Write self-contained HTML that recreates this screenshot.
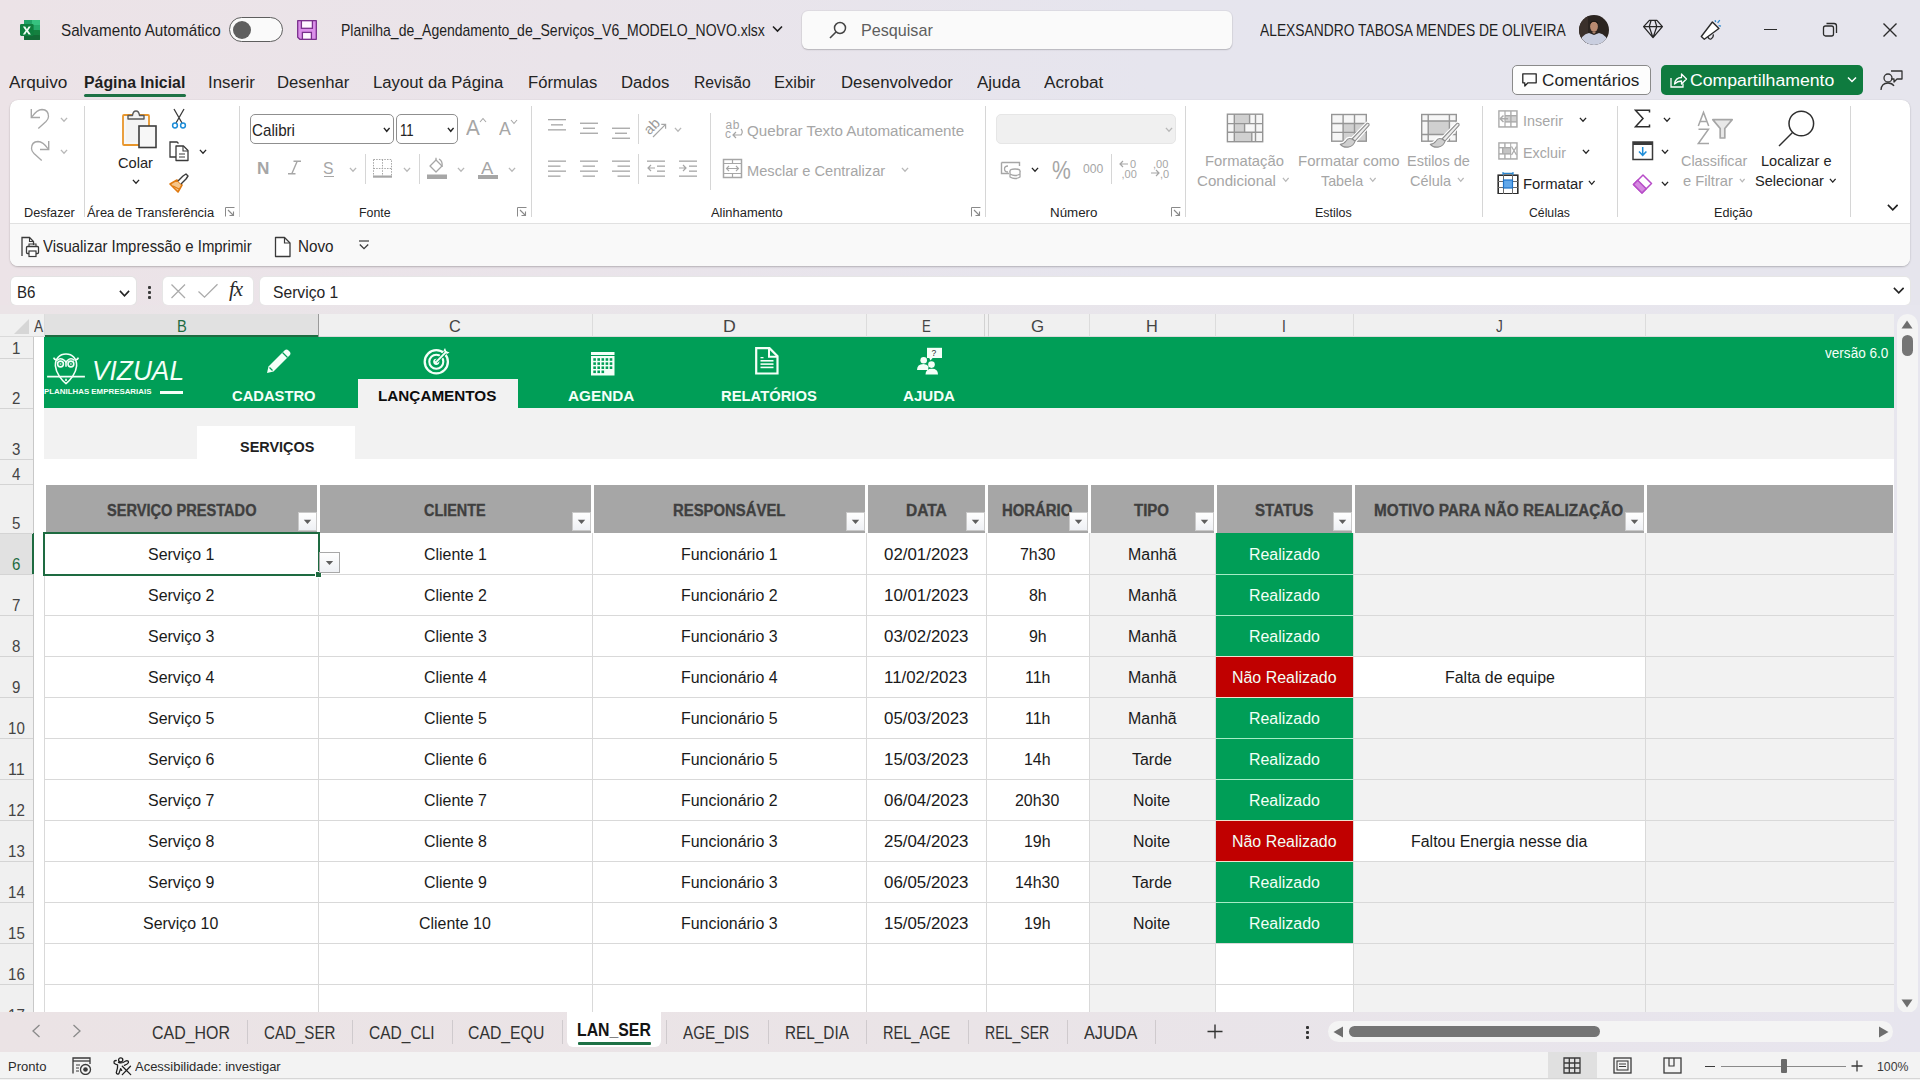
<!DOCTYPE html>
<html><head><meta charset="utf-8"><style>
html,body{margin:0;padding:0;}
body{width:1920px;height:1080px;overflow:hidden;position:relative;font-family:"Liberation Sans", sans-serif;background:#E9E5EA;}
.tx{}
</style></head><body>
<div style="position:absolute;left:0;top:0;width:1920px;height:314px;background:linear-gradient(90deg,#ECE3E7 0%,#EAE4EA 30%,#E6E5EE 60%,#E6E5ED 100%)"></div>
<svg style="position:absolute;left:20px;top:20px;" width="20" height="20" viewBox="0 0 20 20"><rect x="4" y="0" width="16" height="20" rx="1" fill="#1D9A5A"/><rect x="12" y="0" width="8" height="5" fill="#36C27F"/><rect x="4" y="0" width="8" height="5" fill="#21A366"/><rect x="12" y="5" width="8" height="5" fill="#27AB6B"/><rect x="4" y="10" width="16" height="10" rx="1" fill="#15803F"/><rect x="4" y="15" width="16" height="5" rx="1" fill="#136A36"/><rect x="0" y="3.9" width="13.6" height="12" rx="1.3" fill="#0F7F3E"/><path d="M2.9 6.6 H5.2 L6.9 9.3 L8.6 6.6 H10.8 L8.1 10.5 L10.9 14.5 H8.6 L6.8 11.8 L5.1 14.5 H2.8 L5.6 10.5 Z" fill="#F2FFF6"/></svg>
<div id="t0" class="tx" style="position:absolute;left:60.50px;top:22.39px;font-size:15.70px;line-height:17.54px;color:#1F1F1F;font-weight:400;white-space:nowrap;transform-origin:0 0;transform:scaleX(0.9696);">Salvamento Automático</div>
<div style="position:absolute;left:229px;top:17px;width:54px;height:25px;box-sizing:border-box;border:1px solid #5E5E5E;border-radius:13px;background:#FAFAFA"></div>
<div style="position:absolute;left:233px;top:21px;width:18px;height:18px;border-radius:50%;background:#5F5F5F"></div>
<svg style="position:absolute;left:297px;top:20px;" width="20" height="20" viewBox="0 0 20 20"><path d="M0.7 0.7 H19.3 V19.3 H2.8 L0.7 17.2 Z" fill="#DC8FEA" stroke="#7A2F8C" stroke-width="1.3" stroke-linejoin="round"/><rect x="4.4" y="0.7" width="11" height="7.6" fill="#FFF6FF" stroke="#7A2F8C" stroke-width="1.3"/><rect x="5.4" y="12.4" width="9" height="6.9" fill="#FFF6FF" stroke="#7A2F8C" stroke-width="1.3"/></svg>
<div id="t1" class="tx" style="position:absolute;left:341.00px;top:22.39px;font-size:15.70px;line-height:17.54px;color:#1F1F1F;font-weight:400;white-space:nowrap;transform-origin:0 0;transform:scaleX(0.8934);">Planilha_de_Agendamento_de_Serviços_V6_MODELO_NOVO.xlsx</div>
<svg style="position:absolute;left:772px;top:25px;" width="11" height="8" viewBox="0 0 11 8"><path d="M1 1.5 L5.5 6 L10 1.5" stroke="#1F1F1F" stroke-width="1.6" fill="none"/></svg>
<div style="position:absolute;left:802px;top:11px;width:430px;height:38px;box-sizing:border-box;background:#FAFAFA;border-radius:6px;box-shadow:0 1px 1.5px rgba(0,0,0,0.18), 0 0 0 1px rgba(0,0,0,0.04)"></div>
<svg style="position:absolute;left:828px;top:20px;" width="20" height="20" viewBox="0 0 20 20"><circle cx="12" cy="8" r="5.5" stroke="#444" stroke-width="1.5" fill="none"/><path d="M8 12 L2 18" stroke="#444" stroke-width="1.6"/></svg>
<div id="t2" class="tx" style="position:absolute;left:861.00px;top:21.79px;font-size:15.70px;line-height:17.54px;color:#5E5E5E;font-weight:400;white-space:nowrap;transform-origin:0 0;transform:scaleX(1.0292);">Pesquisar</div>
<div id="t3" class="tx" style="position:absolute;left:1260.00px;top:22.39px;font-size:15.70px;line-height:17.54px;color:#1F1F1F;font-weight:400;white-space:nowrap;transform-origin:0 0;transform:scaleX(0.8806);">ALEXSANDRO TABOSA MENDES DE OLIVEIRA</div>
<svg style="position:absolute;left:1579px;top:15px;" width="30" height="30" viewBox="0 0 30 30"><defs><clipPath id="av"><circle cx="15" cy="15" r="15"/></clipPath></defs><g clip-path="url(#av)"><rect width="30" height="30" fill="#2B2420"/><rect x="0" y="0" width="9" height="30" fill="#3A302B"/><path d="M1 30 Q2 19 10 18 L15 20 L20 18 Q28 19 29 30 Z" fill="#C9CEDF"/><ellipse cx="15" cy="11.5" rx="3.9" ry="5.2" fill="#B98A70"/><path d="M11 9 Q15 4.5 19 9 L19 7.5 Q15 4 11 7.5Z" fill="#1A1411"/><path d="M13 17 L15 19 L17 17 Z" fill="#A88068"/></g></svg>
<svg style="position:absolute;left:1643px;top:19px;" width="21" height="20" viewBox="0 0 21 20"><path d="M6.4 1.4 H13.9 L19.4 7.6 L10 18.6 L0.6 7.6 Z M0.6 7.6 H19.4 M8.1 1.4 L6.2 7.6 L10 18.6 L13.8 7.6 L11.9 1.4" stroke="#262626" stroke-width="1.3" fill="none" stroke-linejoin="round"/></svg>
<svg style="position:absolute;left:1700px;top:18px;" width="24" height="24" viewBox="0 0 24 24"><path d="M1.3 18.5 L12.4 4 L18.9 10.5 L4.3 21.3 Z" stroke="#2B2B2B" stroke-width="1.4" fill="#FFFFFF" stroke-linejoin="round"/><path d="M7.8 18.8 Q9 21.8 11.2 20.8 Q13.6 19.3 13.3 16.4" stroke="#2B2B2B" stroke-width="1.3" fill="none"/><path d="M15 2.3 L15.7 4 M19.8 2.2 L17.6 4.8 M18.6 7.6 L21 8.1" stroke="#2F8ACF" stroke-width="1.3"/></svg>
<div style="position:absolute;left:1764px;top:29px;width:13px;height:1.3px;background:#2B2B2B"></div>
<svg style="position:absolute;left:1822px;top:22px;" width="16" height="16" viewBox="0 0 16 16"><rect x="1.5" y="4" width="10" height="10" rx="2" stroke="#2B2B2B" stroke-width="1.3" fill="none"/><path d="M4.5 1.5 H12 Q14.5 1.5 14.5 4 V11" stroke="#2B2B2B" stroke-width="1.3" fill="none"/></svg>
<svg style="position:absolute;left:1882px;top:22px;" width="16" height="16" viewBox="0 0 16 16"><path d="M1.5 1.5 L14.5 14.5 M14.5 1.5 L1.5 14.5" stroke="#2B2B2B" stroke-width="1.4"/></svg>
<div id="t4" class="tx" style="position:absolute;left:8.50px;top:72.73px;font-size:16.42px;line-height:18.35px;color:#242424;font-weight:400;white-space:nowrap;transform-origin:0 0;transform:scaleX(1.0478);">Arquivo</div>
<div id="t5" class="tx" style="position:absolute;left:207.50px;top:72.73px;font-size:16.42px;line-height:18.35px;color:#242424;font-weight:400;white-space:nowrap;transform-origin:0 0;transform:scaleX(1.0265);">Inserir</div>
<div id="t6" class="tx" style="position:absolute;left:277.00px;top:72.73px;font-size:16.42px;line-height:18.35px;color:#242424;font-weight:400;white-space:nowrap;transform-origin:0 0;transform:scaleX(1.0163);">Desenhar</div>
<div id="t7" class="tx" style="position:absolute;left:373.00px;top:72.73px;font-size:16.42px;line-height:18.35px;color:#242424;font-weight:400;white-space:nowrap;transform-origin:0 0;transform:scaleX(1.0202);">Layout da Página</div>
<div id="t8" class="tx" style="position:absolute;left:528.00px;top:72.73px;font-size:16.42px;line-height:18.35px;color:#242424;font-weight:400;white-space:nowrap;transform-origin:0 0;transform:scaleX(1.0135);">Fórmulas</div>
<div id="t9" class="tx" style="position:absolute;left:621.00px;top:72.73px;font-size:16.42px;line-height:18.35px;color:#242424;font-weight:400;white-space:nowrap;transform-origin:0 0;transform:scaleX(1.0182);">Dados</div>
<div id="t10" class="tx" style="position:absolute;left:693.50px;top:72.73px;font-size:16.42px;line-height:18.35px;color:#242424;font-weight:400;white-space:nowrap;transform-origin:0 0;transform:scaleX(0.9581);">Revisão</div>
<div id="t11" class="tx" style="position:absolute;left:774.00px;top:72.73px;font-size:16.42px;line-height:18.35px;color:#242424;font-weight:400;white-space:nowrap;transform-origin:0 0;transform:scaleX(1.0065);">Exibir</div>
<div id="t12" class="tx" style="position:absolute;left:840.50px;top:72.73px;font-size:16.42px;line-height:18.35px;color:#242424;font-weight:400;white-space:nowrap;transform-origin:0 0;transform:scaleX(1.0216);">Desenvolvedor</div>
<div id="t13" class="tx" style="position:absolute;left:976.50px;top:72.73px;font-size:16.42px;line-height:18.35px;color:#242424;font-weight:400;white-space:nowrap;transform-origin:0 0;transform:scaleX(1.0317);">Ajuda</div>
<div id="t14" class="tx" style="position:absolute;left:1043.50px;top:72.73px;font-size:16.42px;line-height:18.35px;color:#242424;font-weight:400;white-space:nowrap;transform-origin:0 0;transform:scaleX(1.0487);">Acrobat</div>
<div id="t15" class="tx" style="position:absolute;left:83.50px;top:72.73px;font-size:16.42px;line-height:18.35px;color:#1F1F1F;font-weight:700;white-space:nowrap;transform-origin:0 0;transform:scaleX(0.9661);">Página Inicial</div>
<div style="position:absolute;left:84px;top:94px;width:102px;height:3px;background:#1E7145;border-radius:2px"></div>
<div style="position:absolute;left:1512px;top:65px;width:139px;height:30px;box-sizing:border-box;border:1px solid #8A8A8A;border-radius:5px;background:#FDFDFD"></div>
<svg style="position:absolute;left:1521px;top:72px;" width="18" height="17" viewBox="0 0 18 17"><path d="M1.8 1.8 H15.2 V10.8 H7 L3.8 14 V10.8 H1.8 Z" stroke="#242424" stroke-width="1.3" fill="none" stroke-linejoin="round"/></svg>
<div id="t16" class="tx" style="position:absolute;left:1541.50px;top:71.43px;font-size:16.42px;line-height:18.35px;color:#1F1F1F;font-weight:400;white-space:nowrap;transform-origin:0 0;transform:scaleX(1.0461);">Comentários</div>
<div style="position:absolute;left:1661px;top:65px;width:202px;height:30px;border-radius:5px;background:#0F7B3F"></div>
<svg style="position:absolute;left:1669px;top:71px;" width="19" height="18" viewBox="0 0 19 18"><path d="M2 7 V16 H14 V12.5" stroke="#fff" stroke-width="1.3" fill="none"/><path d="M5.5 13 Q6.5 6.5 12.5 6.5 V3 L17.5 8 L12.5 13 V10 Q8.5 10 5.5 13Z" stroke="#fff" stroke-width="1.3" fill="none" stroke-linejoin="round"/></svg>
<div id="t17" class="tx" style="position:absolute;left:1690.00px;top:71.43px;font-size:16.42px;line-height:18.35px;color:#FFFFFF;font-weight:400;white-space:nowrap;transform-origin:0 0;transform:scaleX(1.0765);">Compartilhamento</div>
<svg style="position:absolute;left:1847px;top:76px;" width="10" height="8" viewBox="0 0 10 8"><path d="M1 1.5 L5 5.5 L9 1.5" stroke="#fff" stroke-width="1.5" fill="none"/></svg>
<svg style="position:absolute;left:1880px;top:69px;" width="23" height="22" viewBox="0 0 23 22"><circle cx="8" cy="9" r="4" stroke="#333" stroke-width="1.3" fill="none"/><path d="M1 21 Q1.5 14 8 14 Q12 14 14 17" stroke="#333" stroke-width="1.3" fill="none"/><path d="M11 2 H22 V10 H17 L14 13 V10 H11" stroke="#333" stroke-width="1.3" fill="none" stroke-linejoin="round"/></svg>
<div style="position:absolute;left:10px;top:100px;width:1900px;height:166px;background:#FFFFFF;border-radius:8px;box-shadow:0 1px 2px rgba(0,0,0,0.22),0 0 1px rgba(0,0,0,0.12);overflow:hidden"><div style="position:absolute;left:0;top:123px;width:1900px;height:43px;background:#F9F9F9;border-top:1px solid #E1E1E1"></div></div>
<div style="position:absolute;left:84px;top:106px;width:1px;height:111px;background:#D6D6D6"></div>
<div style="position:absolute;left:239px;top:106px;width:1px;height:111px;background:#D6D6D6"></div>
<div style="position:absolute;left:531px;top:106px;width:1px;height:111px;background:#D6D6D6"></div>
<div style="position:absolute;left:710px;top:113px;width:1px;height:77px;background:#D6D6D6"></div>
<div style="position:absolute;left:985px;top:106px;width:1px;height:111px;background:#D6D6D6"></div>
<div style="position:absolute;left:1185px;top:106px;width:1px;height:111px;background:#D6D6D6"></div>
<div style="position:absolute;left:1482px;top:106px;width:1px;height:111px;background:#D6D6D6"></div>
<div style="position:absolute;left:1617px;top:106px;width:1px;height:111px;background:#D6D6D6"></div>
<div style="position:absolute;left:1850px;top:106px;width:1px;height:111px;background:#D6D6D6"></div>
<div style="position:absolute;left:365px;top:154px;width:1px;height:30px;background:#D6D6D6"></div>
<div style="position:absolute;left:419px;top:154px;width:1px;height:30px;background:#D6D6D6"></div>
<div style="position:absolute;left:638px;top:154px;width:1px;height:30px;background:#D6D6D6"></div>
<div style="position:absolute;left:1111px;top:154px;width:1px;height:30px;background:#D6D6D6"></div>
<div style="position:absolute;left:638px;top:114px;width:1px;height:30px;background:#D6D6D6"></div>
<div id="t18" class="tx" style="position:absolute;left:23.70px;top:205.95px;font-size:12.65px;line-height:14.13px;color:#242424;font-weight:400;white-space:nowrap;transform-origin:0 0;transform:scaleX(1.0041);">Desfazer</div>
<div id="t19" class="tx" style="position:absolute;left:87.10px;top:205.95px;font-size:12.65px;line-height:14.13px;color:#242424;font-weight:400;white-space:nowrap;transform-origin:0 0;transform:scaleX(1.0219);">Área de Transferência</div>
<div id="t20" class="tx" style="position:absolute;left:358.50px;top:205.95px;font-size:12.65px;line-height:14.13px;color:#242424;font-weight:400;white-space:nowrap;transform-origin:0 0;transform:scaleX(0.9775);">Fonte</div>
<div id="t21" class="tx" style="position:absolute;left:711.00px;top:205.95px;font-size:12.65px;line-height:14.13px;color:#242424;font-weight:400;white-space:nowrap;transform-origin:0 0;transform:scaleX(1.0216);">Alinhamento</div>
<div id="t22" class="tx" style="position:absolute;left:1050.40px;top:205.95px;font-size:12.65px;line-height:14.13px;color:#242424;font-weight:400;white-space:nowrap;transform-origin:0 0;transform:scaleX(1.0563);">Número</div>
<div id="t23" class="tx" style="position:absolute;left:1314.50px;top:205.95px;font-size:12.65px;line-height:14.13px;color:#242424;font-weight:400;white-space:nowrap;transform-origin:0 0;transform:scaleX(0.9856);">Estilos</div>
<div id="t24" class="tx" style="position:absolute;left:1528.60px;top:205.95px;font-size:12.65px;line-height:14.13px;color:#242424;font-weight:400;white-space:nowrap;transform-origin:0 0;transform:scaleX(0.9678);">Células</div>
<div id="t25" class="tx" style="position:absolute;left:1713.50px;top:205.95px;font-size:12.65px;line-height:14.13px;color:#242424;font-weight:400;white-space:nowrap;transform-origin:0 0;transform:scaleX(0.9985);">Edição</div>
<svg style="position:absolute;left:225px;top:207px;" width="10" height="10" viewBox="0 0 10 10"><path d="M0.5 9.5 V0.5 H9.5" stroke="#8A8A8A" stroke-width="1" fill="none"/><path d="M3 3 L8.5 8.5 M4.5 8.5 H8.5 V4.5" stroke="#8A8A8A" stroke-width="1.1" fill="none"/></svg>
<svg style="position:absolute;left:517px;top:207px;" width="10" height="10" viewBox="0 0 10 10"><path d="M0.5 9.5 V0.5 H9.5" stroke="#8A8A8A" stroke-width="1" fill="none"/><path d="M3 3 L8.5 8.5 M4.5 8.5 H8.5 V4.5" stroke="#8A8A8A" stroke-width="1.1" fill="none"/></svg>
<svg style="position:absolute;left:971px;top:207px;" width="10" height="10" viewBox="0 0 10 10"><path d="M0.5 9.5 V0.5 H9.5" stroke="#8A8A8A" stroke-width="1" fill="none"/><path d="M3 3 L8.5 8.5 M4.5 8.5 H8.5 V4.5" stroke="#8A8A8A" stroke-width="1.1" fill="none"/></svg>
<svg style="position:absolute;left:1171px;top:207px;" width="10" height="10" viewBox="0 0 10 10"><path d="M0.5 9.5 V0.5 H9.5" stroke="#8A8A8A" stroke-width="1" fill="none"/><path d="M3 3 L8.5 8.5 M4.5 8.5 H8.5 V4.5" stroke="#8A8A8A" stroke-width="1.1" fill="none"/></svg>
<svg style="position:absolute;left:30px;top:108px;" width="20" height="22" viewBox="0 0 20 22"><path d="M1.3 1 V9.5 H10" stroke="#A6A6A6" stroke-width="1.4" fill="none"/><path d="M1.8 9 Q7 1.5 12 1.5 Q18.5 1.8 18.5 8.5 Q18.5 11 16 13.5 L8.3 20.5" stroke="#A6A6A6" stroke-width="1.3" fill="none"/></svg>
<svg style="position:absolute;left:30px;top:140px;" width="20" height="22" viewBox="0 0 20 22"><path d="M18.7 1 V9.5 H10" stroke="#A6A6A6" stroke-width="1.4" fill="none"/><path d="M18.2 9 Q13 1.5 8 1.5 Q1.5 1.8 1.5 8.5 Q1.5 11 4 13.5 L11.7 20.5" stroke="#A6A6A6" stroke-width="1.3" fill="none"/></svg>
<svg style="position:absolute;left:59.5px;top:117.0px;" width="8" height="5.5" viewBox="0 0 8 5.5"><path d="M0.9 0.9 L4.0 4.3 L7.1 0.9" stroke="#B8B8B8" stroke-width="1.3" fill="none"/></svg>
<svg style="position:absolute;left:59.5px;top:149.0px;" width="8" height="5.5" viewBox="0 0 8 5.5"><path d="M0.9 0.9 L4.0 4.3 L7.1 0.9" stroke="#B8B8B8" stroke-width="1.3" fill="none"/></svg>
<svg style="position:absolute;left:120px;top:109px;" width="38" height="40" viewBox="0 0 38 40"><rect x="3" y="6" width="26" height="30" rx="1" fill="#F7F7F7" stroke="#E8962C" stroke-width="1.8"/><rect x="6" y="9" width="20" height="24" fill="#F3F3F3"/><path d="M8 10 V6.5 H12.5 Q13 2 16 2 Q19 2 19.5 6.5 H24 V10 Z" fill="#F3F3F3" stroke="#5A5A5A" stroke-width="1.4" stroke-linejoin="round"/><rect x="19" y="17" width="17" height="21.5" fill="#F7F7F7" stroke="#3E3E3E" stroke-width="1.6"/></svg>
<div id="t26" class="tx" style="position:absolute;left:117.50px;top:155.34px;font-size:14.54px;line-height:16.24px;color:#242424;font-weight:400;white-space:nowrap;transform-origin:0 0;transform:scaleX(1.0076);">Colar</div>
<svg style="position:absolute;left:131.5px;top:179.0px;" width="8" height="5.5" viewBox="0 0 8 5.5"><path d="M0.9 0.9 L4.0 4.3 L7.1 0.9" stroke="#242424" stroke-width="1.3" fill="none"/></svg>
<svg style="position:absolute;left:171px;top:108px;" width="16" height="22" viewBox="0 0 16 22"><path d="M3 1 L11 15 M13 1 L5 15" stroke="#3A3A3A" stroke-width="1.3"/><circle cx="4" cy="17.5" r="2.4" stroke="#1E8DD8" stroke-width="1.5" fill="none"/><circle cx="12" cy="17.5" r="2.4" stroke="#1E8DD8" stroke-width="1.5" fill="none"/></svg>
<svg style="position:absolute;left:168px;top:140px;" width="22" height="22" viewBox="0 0 22 22"><path d="M8 17 H2 V2 H9 L10.5 3.5" stroke="#3A3A3A" stroke-width="1.3" fill="none"/><path d="M8 6 H15.5 L20 10.5 V20.5 H8 Z" stroke="#3A3A3A" stroke-width="1.3" fill="#fff" stroke-linejoin="round"/><path d="M15 6 V11 H20 M11 14 H17 M11 17 H17" stroke="#3A3A3A" stroke-width="1.1" fill="none"/></svg>
<svg style="position:absolute;left:198.5px;top:149.0px;" width="8" height="5.5" viewBox="0 0 8 5.5"><path d="M0.9 0.9 L4.0 4.3 L7.1 0.9" stroke="#242424" stroke-width="1.3" fill="none"/></svg>
<svg style="position:absolute;left:168px;top:172px;" width="22" height="21" viewBox="0 0 22 21"><path d="M2 12 L9 8 L14 13 L10 20 Z" fill="#F5C58A" stroke="#E07A10" stroke-width="1.6" stroke-linejoin="round"/><path d="M5 14 L11 17" stroke="#E07A10" stroke-width="1.2"/><path d="M10 9 L15 4 L18 2 L20 4 L18 7 L13 12" stroke="#3A3A3A" stroke-width="1.4" fill="#fff" stroke-linejoin="round"/></svg>
<div style="position:absolute;left:250px;top:114px;width:144px;height:30px;box-sizing:border-box;border:1px solid #8F8F8F;border-radius:5px;background:#fff"></div>
<div id="t27" class="tx" style="position:absolute;left:252.30px;top:121.53px;font-size:15.99px;line-height:17.86px;color:#242424;font-weight:400;white-space:nowrap;transform-origin:0 0;transform:scaleX(0.9490);">Calibri</div>
<svg style="position:absolute;left:382.5px;top:127.0px;" width="7.5" height="5.5" viewBox="0 0 7.5 5.5"><path d="M0.9 0.9 L3.75 4.3 L6.6 0.9" stroke="#242424" stroke-width="1.4" fill="none"/></svg>
<div style="position:absolute;left:396px;top:114px;width:62px;height:30px;box-sizing:border-box;border:1px solid #8F8F8F;border-radius:5px;background:#fff"></div>
<div id="t28" class="tx" style="position:absolute;left:399.50px;top:121.53px;font-size:15.99px;line-height:17.86px;color:#242424;font-weight:400;white-space:nowrap;transform-origin:0 0;transform:scaleX(0.8256);">11</div>
<svg style="position:absolute;left:446.5px;top:127.0px;" width="7.5" height="5.5" viewBox="0 0 7.5 5.5"><path d="M0.9 0.9 L3.75 4.3 L6.6 0.9" stroke="#242424" stroke-width="1.4" fill="none"/></svg>
<div id="t29" class="tx" style="position:absolute;left:465.50px;top:115.34px;font-size:22.82px;line-height:25.49px;color:#A6A6A6;font-weight:400;white-space:nowrap;transform-origin:0 0;transform:scaleX(0.9068);">A</div>
<svg style="position:absolute;left:479px;top:117px;" width="8" height="6" viewBox="0 0 8 6"><path d="M1 5 L4 1.5 L7 5" stroke="#A6A6A6" stroke-width="1.1" fill="none"/></svg>
<div id="t30" class="tx" style="position:absolute;left:499.00px;top:119.42px;font-size:18.31px;line-height:20.46px;color:#A6A6A6;font-weight:400;white-space:nowrap;transform-origin:0 0;transform:scaleX(0.9657);">A</div>
<svg style="position:absolute;left:510px;top:119px;" width="8" height="6" viewBox="0 0 8 6"><path d="M1 1 L4 4.5 L7 1" stroke="#A6A6A6" stroke-width="1.1" fill="none"/></svg>
<div id="t31" class="tx" style="position:absolute;left:257.40px;top:158.80px;font-size:17.01px;line-height:19.00px;color:#A6A6A6;font-weight:700;white-space:nowrap;transform-origin:0 0;transform:scaleX(1.0097);">N</div>
<svg style="position:absolute;left:287px;top:160px;" width="15" height="15" viewBox="0 0 15 15"><path d="M6.5 1.2 H14 M1 13.8 H8.5 M10.2 1.2 L4.8 13.8" stroke="#A6A6A6" stroke-width="1.4" fill="none"/></svg>
<div id="t32" class="tx" style="position:absolute;left:323.00px;top:158.80px;font-size:17.01px;line-height:19.00px;color:#A6A6A6;font-weight:400;white-space:nowrap;transform-origin:0 0;transform:scaleX(0.9256);">S</div>
<div style="position:absolute;left:324px;top:175.5px;width:10px;height:1.3px;background:#A6A6A6"></div>
<svg style="position:absolute;left:348.5px;top:167.0px;" width="8" height="5.5" viewBox="0 0 8 5.5"><path d="M0.9 0.9 L4.0 4.3 L7.1 0.9" stroke="#B8B8B8" stroke-width="1.3" fill="none"/></svg>
<svg style="position:absolute;left:372px;top:158px;" width="21" height="21" viewBox="0 0 21 21"><g stroke="#A6A6A6" stroke-width="1" stroke-dasharray="1.5 1.2" fill="none"><path d="M1.5 1.5 H19.5 V19 M1.5 1.5 V19 M10.5 1.5 V19 M1.5 10.5 H19.5"/></g><rect x="1" y="17.5" width="19" height="2.2" fill="#A6A6A6"/></svg>
<svg style="position:absolute;left:402.5px;top:167.0px;" width="8" height="5.5" viewBox="0 0 8 5.5"><path d="M0.9 0.9 L4.0 4.3 L7.1 0.9" stroke="#B8B8B8" stroke-width="1.3" fill="none"/></svg>
<svg style="position:absolute;left:427px;top:157px;" width="21" height="23" viewBox="0 0 21 23"><path d="M3 9 L9 3 L15 9 L9 15 Z" stroke="#A6A6A6" stroke-width="1.3" fill="none" stroke-linejoin="round"/><path d="M9 3 V0.8 M12 2 Q16 4 15 10" stroke="#A6A6A6" stroke-width="1.3" fill="none"/><rect x="0" y="17.5" width="20" height="4.5" fill="#A6A6A6"/></svg>
<svg style="position:absolute;left:456.5px;top:167.0px;" width="8" height="5.5" viewBox="0 0 8 5.5"><path d="M0.9 0.9 L4.0 4.3 L7.1 0.9" stroke="#B8B8B8" stroke-width="1.3" fill="none"/></svg>
<div id="t33" class="tx" style="position:absolute;left:481.00px;top:158.80px;font-size:17.01px;line-height:19.00px;color:#A6A6A6;font-weight:400;white-space:nowrap;transform-origin:0 0;transform:scaleX(1.0755);">A</div>
<div style="position:absolute;left:478px;top:174.5px;width:20px;height:4.5px;background:#A6A6A6"></div>
<svg style="position:absolute;left:507.5px;top:167.0px;" width="8" height="5.5" viewBox="0 0 8 5.5"><path d="M0.9 0.9 L4.0 4.3 L7.1 0.9" stroke="#B8B8B8" stroke-width="1.3" fill="none"/></svg>
<svg style="position:absolute;left:548px;top:115px;" width="20" height="65" viewBox="0 0 20 65"><rect x="0" y="4" width="18" height="1.3" fill="#A6A6A6"/><rect x="3" y="9.2" width="12" height="1.3" fill="#A6A6A6"/><rect x="0" y="14.2" width="18" height="1.3" fill="#A6A6A6"/></svg>
<svg style="position:absolute;left:580px;top:115px;" width="20" height="65" viewBox="0 0 20 65"><rect x="0" y="7.6" width="18" height="1.3" fill="#A6A6A6"/><rect x="3" y="12.6" width="12" height="1.3" fill="#A6A6A6"/><rect x="0" y="17.6" width="18" height="1.3" fill="#A6A6A6"/></svg>
<svg style="position:absolute;left:612px;top:115px;" width="20" height="65" viewBox="0 0 20 65"><rect x="0" y="12.6" width="18" height="1.3" fill="#A6A6A6"/><rect x="3" y="17.6" width="12" height="1.3" fill="#A6A6A6"/><rect x="0" y="22.6" width="18" height="1.3" fill="#A6A6A6"/></svg>
<svg style="position:absolute;left:643px;top:116px;" width="26" height="24" viewBox="0 0 26 24"><text x="0" y="0" font-size="14.5" fill="#9A9A9A" font-family="Liberation Sans" transform="translate(6.5,19.5) rotate(-45)">ab</text><path d="M10 21 L22.6 8.3 M18.3 8.3 H22.6 V12.7" stroke="#A6A6A6" stroke-width="1.2" fill="none"/></svg>
<svg style="position:absolute;left:673.5px;top:127.0px;" width="8" height="5.5" viewBox="0 0 8 5.5"><path d="M0.9 0.9 L4.0 4.3 L7.1 0.9" stroke="#B8B8B8" stroke-width="1.3" fill="none"/></svg>
<svg style="position:absolute;left:548px;top:115px;" width="20" height="65" viewBox="0 0 20 65"><rect x="0" y="45.5" width="18" height="1.3" fill="#A6A6A6"/><rect x="0" y="50.5" width="12.5" height="1.3" fill="#A6A6A6"/><rect x="0" y="55.5" width="18" height="1.3" fill="#A6A6A6"/><rect x="0" y="60.5" width="12.5" height="1.3" fill="#A6A6A6"/></svg>
<svg style="position:absolute;left:580px;top:115px;" width="20" height="65" viewBox="0 0 20 65"><rect x="0" y="45.5" width="18" height="1.3" fill="#A6A6A6"/><rect x="2.7" y="50.5" width="12.3" height="1.3" fill="#A6A6A6"/><rect x="0" y="55.5" width="18" height="1.3" fill="#A6A6A6"/><rect x="2.7" y="60.5" width="12.3" height="1.3" fill="#A6A6A6"/></svg>
<svg style="position:absolute;left:612px;top:115px;" width="20" height="65" viewBox="0 0 20 65"><rect x="0" y="45.5" width="18" height="1.3" fill="#A6A6A6"/><rect x="5.5" y="50.5" width="12.5" height="1.3" fill="#A6A6A6"/><rect x="0" y="55.5" width="18" height="1.3" fill="#A6A6A6"/><rect x="5.5" y="60.5" width="12.5" height="1.3" fill="#A6A6A6"/></svg>
<svg style="position:absolute;left:647px;top:158px;" width="20" height="20" viewBox="0 0 20 20"><rect x="0" y="2.5" width="18" height="1.3" fill="#A6A6A6"/><rect x="10" y="7.5" width="8" height="1.3" fill="#A6A6A6"/><rect x="10" y="12.5" width="8" height="1.3" fill="#A6A6A6"/><rect x="0" y="17.5" width="18" height="1.3" fill="#A6A6A6"/><path d="M8 10 H1 M4 7 L1 10 L4 13" stroke="#A6A6A6" stroke-width="1.2" fill="none"/></svg>
<svg style="position:absolute;left:679px;top:158px;" width="20" height="20" viewBox="0 0 20 20"><rect x="0" y="2.5" width="18" height="1.3" fill="#A6A6A6"/><rect x="10" y="7.5" width="8" height="1.3" fill="#A6A6A6"/><rect x="10" y="12.5" width="8" height="1.3" fill="#A6A6A6"/><rect x="0" y="17.5" width="18" height="1.3" fill="#A6A6A6"/><path d="M0 10 H7 M4 7 L7 10 L4 13" stroke="#A6A6A6" stroke-width="1.2" fill="none"/></svg>
<svg style="position:absolute;left:725px;top:119px;" width="20" height="21" viewBox="0 0 20 21"><text x="0.5" y="9.5" font-size="12" fill="#A6A6A6" font-family="Liberation Sans" textLength="14">ab</text><text x="0" y="19" font-size="12" fill="#A6A6A6" font-family="Liberation Sans">c</text><path d="M16 10 Q18.5 13 16 16 H8 M11 13 L8 16 L11 19" stroke="#A6A6A6" stroke-width="1.2" fill="none"/></svg>
<div id="t34" class="tx" style="position:absolute;left:747.40px;top:121.88px;font-size:15.26px;line-height:17.05px;color:#A6A6A6;font-weight:400;white-space:nowrap;transform-origin:0 0;transform:scaleX(0.9944);">Quebrar Texto Automaticamente</div>
<svg style="position:absolute;left:722px;top:158px;" width="21" height="21" viewBox="0 0 21 21"><rect x="1.5" y="1.5" width="18" height="18" stroke="#A6A6A6" stroke-width="1.5" fill="none"/><path d="M1.5 5.5 H19.5 M1.5 15.5 H19.5 M10.5 1.5 V5.5 M10.5 15.5 V19.5" stroke="#A6A6A6" stroke-width="1.2"/><path d="M4.5 10.5 H16.5 M7 8 L4.5 10.5 L7 13 M14 8 L16.5 10.5 L14 13" stroke="#A6A6A6" stroke-width="1.1" fill="none"/></svg>
<div id="t35" class="tx" style="position:absolute;left:747.40px;top:161.68px;font-size:15.26px;line-height:17.05px;color:#A6A6A6;font-weight:400;white-space:nowrap;transform-origin:0 0;transform:scaleX(0.9592);">Mesclar e Centralizar</div>
<svg style="position:absolute;left:901.0px;top:167.0px;" width="8" height="5.5" viewBox="0 0 8 5.5"><path d="M0.9 0.9 L4.0 4.3 L7.1 0.9" stroke="#B8B8B8" stroke-width="1.3" fill="none"/></svg>
<div style="position:absolute;left:996px;top:114px;width:180px;height:30px;box-sizing:border-box;border:1px solid #E6E6E6;border-radius:5px;background:#F0F0F0"></div>
<svg style="position:absolute;left:1164.5px;top:127.0px;" width="8" height="5.5" viewBox="0 0 8 5.5"><path d="M0.9 0.9 L4.0 4.3 L7.1 0.9" stroke="#B8B8B8" stroke-width="1.3" fill="none"/></svg>
<svg style="position:absolute;left:1000px;top:161px;" width="23" height="19" viewBox="0 0 23 19"><path d="M1.5 1.5 H19.5 V5 M1.5 1.5 V12.5 H9" stroke="#A6A6A6" stroke-width="1.4" fill="none"/><path d="M8 5 Q4.5 5 4.5 8 Q4.5 11 8 11" stroke="#A6A6A6" stroke-width="1.3" fill="none"/><ellipse cx="15" cy="10" rx="5" ry="2" fill="#fff" stroke="#A6A6A6" stroke-width="1.3"/><path d="M10 10 V16 Q15 19 20 16 V10 M10 13 Q15 16 20 13" stroke="#A6A6A6" stroke-width="1.3" fill="#fff"/></svg>
<svg style="position:absolute;left:1030.5px;top:167.0px;" width="8" height="5.5" viewBox="0 0 8 5.5"><path d="M0.9 0.9 L4.0 4.3 L7.1 0.9" stroke="#242424" stroke-width="1.3" fill="none"/></svg>
<div id="t36" class="tx" style="position:absolute;left:1052.00px;top:155.57px;font-size:25.44px;line-height:28.42px;color:#A6A6A6;font-weight:400;white-space:nowrap;transform-origin:0 0;transform:scaleX(0.8309);">%</div>
<div id="t37" class="tx" style="position:absolute;left:1083.00px;top:161.76px;font-size:13.08px;line-height:14.61px;color:#A6A6A6;font-weight:400;white-space:nowrap;transform-origin:0 0;transform:scaleX(0.9300);">000</div>
<svg style="position:absolute;left:1118px;top:158px;" width="21" height="22" viewBox="0 0 21 22"><path d="M10 6 H2 M5 3 L2 6 L5 9" stroke="#A6A6A6" stroke-width="1.2" fill="none"/><text x="12" y="10" font-size="11" fill="#A6A6A6" font-family="Liberation Sans">0</text><text x="3.5" y="20" font-size="11" fill="#A6A6A6" font-family="Liberation Sans">,00</text></svg>
<svg style="position:absolute;left:1150px;top:158px;" width="21" height="22" viewBox="0 0 21 22"><text x="3" y="10" font-size="11" fill="#A6A6A6" font-family="Liberation Sans">,00</text><path d="M1 15 H9 M6 12 L9 15 L6 18" stroke="#A6A6A6" stroke-width="1.2" fill="none"/><text x="10" y="20" font-size="11" fill="#A6A6A6" font-family="Liberation Sans">,0</text></svg>
<svg style="position:absolute;left:1222px;top:108px;" width="46" height="40" viewBox="0 0 46 40"><rect x="5.4" y="6.2" width="35.3" height="27.5" fill="#F6F6F6"/><rect x="12.3" y="6.2" width="15.3" height="9.4" fill="#D0D0D0"/><rect x="12.3" y="15.6" width="10.3" height="8.7" fill="#D0D0D0"/><rect x="12.3" y="24.3" width="17.5" height="9.4" fill="#D0D0D0"/><g stroke="#959595" stroke-width="1.4" fill="none"><rect x="5.4" y="6.2" width="35.3" height="27.5"/><path d="M12.3 6.2 V33.7 M33.5 6.2 V33.7 M5.4 15.6 H40.7 M5.4 24.3 H40.7 M27.6 6.2 V15.6 M22.6 15.6 V24.3 M29.8 24.3 V33.7"/></g></svg>
<svg style="position:absolute;left:1326px;top:108px;" width="50" height="44" viewBox="0 0 50 44"><rect x="5.7" y="6.5" width="34.6" height="26.7" fill="#F6F6F6"/><rect x="17.1" y="15.5" width="23.2" height="17.7" fill="#D0D0D0"/><g stroke="#959595" stroke-width="1.4" fill="none"><rect x="5.7" y="6.5" width="34.6" height="26.7"/><path d="M17.1 6.5 V33.2 M28.5 6.5 V33.2 M5.7 15.5 H40.3 M5.7 24.4 H40.3"/></g><g stroke="#FFFFFF" stroke-width="3.5" fill="#FFFFFF" stroke-linejoin="round"><path d="M41.2 15.2 Q43.5 15 43 17.3 L29 33 L26 31 Z"/><path d="M26 31 Q22 29.5 20 33 Q18 36 14.3 36.3 Q17 39.6 22 39.1 Q28 38 29 33 Z"/></g><g stroke="#8E8E8E" stroke-width="1.1" stroke-linejoin="round"><path d="M41.2 15.2 Q43.5 15 43 17.3 L29 33 L26 31 Z" fill="#EDEDED"/><path d="M26 31 Q22 29.5 20 33 Q18 36 14.3 36.3 Q17 39.6 22 39.1 Q28 38 29 33 Z" fill="#CFCFCF"/></g></svg>
<svg style="position:absolute;left:1416px;top:108px;" width="50" height="44" viewBox="0 0 50 44"><rect x="5.7" y="6.5" width="34.6" height="26.7" fill="#F6F6F6"/><rect x="12.2" y="13" width="21.2" height="13.5" fill="#D0D0D0"/><g stroke="#959595" stroke-width="1.4" fill="none"><rect x="5.7" y="6.5" width="34.6" height="26.7"/><path d="M12.2 6.5 V33.2 M33.4 6.5 V33.2 M5.7 13 H40.3 M5.7 26.5 H40.3"/></g><g stroke="#FFFFFF" stroke-width="3.5" fill="#FFFFFF" stroke-linejoin="round"><path d="M41.2 15.2 Q43.5 15 43 17.3 L29 33 L26 31 Z"/><path d="M26 31 Q22 29.5 20 33 Q18 36 14.3 36.3 Q17 39.6 22 39.1 Q28 38 29 33 Z"/></g><g stroke="#8E8E8E" stroke-width="1.1" stroke-linejoin="round"><path d="M41.2 15.2 Q43.5 15 43 17.3 L29 33 L26 31 Z" fill="#EDEDED"/><path d="M26 31 Q22 29.5 20 33 Q18 36 14.3 36.3 Q17 39.6 22 39.1 Q28 38 29 33 Z" fill="#CFCFCF"/></g></svg>
<div id="t38" class="tx" style="position:absolute;left:1204.60px;top:153.02px;font-size:15.12px;line-height:16.89px;color:#A6A6A6;font-weight:400;white-space:nowrap;transform-origin:0 0;transform:scaleX(0.9786);">Formatação</div>
<div id="t39" class="tx" style="position:absolute;left:1197.30px;top:172.72px;font-size:15.12px;line-height:16.89px;color:#A6A6A6;font-weight:400;white-space:nowrap;transform-origin:0 0;transform:scaleX(0.9991);">Condicional</div>
<svg style="position:absolute;left:1281.5px;top:177.0px;" width="7.5" height="5.5" viewBox="0 0 7.5 5.5"><path d="M0.9 0.9 L3.75 4.3 L6.6 0.9" stroke="#B8B8B8" stroke-width="1.3" fill="none"/></svg>
<div id="t40" class="tx" style="position:absolute;left:1297.60px;top:153.02px;font-size:15.12px;line-height:16.89px;color:#A6A6A6;font-weight:400;white-space:nowrap;transform-origin:0 0;transform:scaleX(0.9918);">Formatar como</div>
<div id="t41" class="tx" style="position:absolute;left:1321.00px;top:172.72px;font-size:15.12px;line-height:16.89px;color:#A6A6A6;font-weight:400;white-space:nowrap;transform-origin:0 0;transform:scaleX(0.9476);">Tabela</div>
<svg style="position:absolute;left:1368.5px;top:177.0px;" width="7.5" height="5.5" viewBox="0 0 7.5 5.5"><path d="M0.9 0.9 L3.75 4.3 L6.6 0.9" stroke="#B8B8B8" stroke-width="1.3" fill="none"/></svg>
<div id="t42" class="tx" style="position:absolute;left:1406.70px;top:153.02px;font-size:15.12px;line-height:16.89px;color:#A6A6A6;font-weight:400;white-space:nowrap;transform-origin:0 0;transform:scaleX(0.9585);">Estilos de</div>
<div id="t43" class="tx" style="position:absolute;left:1410.20px;top:172.72px;font-size:15.12px;line-height:16.89px;color:#A6A6A6;font-weight:400;white-space:nowrap;transform-origin:0 0;transform:scaleX(0.9570);">Célula</div>
<svg style="position:absolute;left:1456.5px;top:177.0px;" width="7.5" height="5.5" viewBox="0 0 7.5 5.5"><path d="M0.9 0.9 L3.75 4.3 L6.6 0.9" stroke="#B8B8B8" stroke-width="1.3" fill="none"/></svg>
<svg style="position:absolute;left:1497px;top:109px;" width="22" height="20" viewBox="0 0 22 20"><rect x="1.2" y="1.2" width="19.5" height="17.5" fill="#ABABAB"/><g fill="#FFFFFF"><rect x="8.6" y="2.6" width="4.6" height="3.4"/><rect x="14.6" y="2.6" width="4.6" height="3.4"/><rect x="8.6" y="13.6" width="4.6" height="3.6"/><rect x="14.6" y="13.6" width="4.6" height="3.6"/><rect x="2.6" y="2.6" width="4.8" height="14.6"/></g><g fill="#D2D2D2"><rect x="8.6" y="7.4" width="4.6" height="4.8"/><rect x="14.6" y="7.4" width="4.6" height="4.8"/></g><path d="M11 9.8 H3.5 M6.5 6.5 L3.2 9.8 L6.5 13" stroke="#ABABAB" stroke-width="1.5" fill="none"/></svg>
<div id="t44" class="tx" style="position:absolute;left:1522.60px;top:111.68px;font-size:15.26px;line-height:17.05px;color:#A6A6A6;font-weight:400;white-space:nowrap;transform-origin:0 0;transform:scaleX(0.9440);">Inserir</div>
<svg style="position:absolute;left:1578.5px;top:117.0px;" width="8" height="5.5" viewBox="0 0 8 5.5"><path d="M0.9 0.9 L4.0 4.3 L7.1 0.9" stroke="#242424" stroke-width="1.3" fill="none"/></svg>
<svg style="position:absolute;left:1497px;top:141px;" width="22" height="20" viewBox="0 0 22 20"><rect x="1.2" y="1.2" width="19.5" height="17.5" fill="#ABABAB"/><g fill="#FFFFFF"><rect x="2.6" y="2.6" width="4.6" height="3.4"/><rect x="8.6" y="2.6" width="4.6" height="3.4"/><rect x="2.6" y="13.6" width="4.6" height="3.6"/><rect x="8.6" y="13.6" width="4.6" height="3.6"/><rect x="14.2" y="2.6" width="5.1" height="14.6"/><rect x="2.6" y="7.4" width="2.4" height="4.8"/></g><rect x="6.4" y="7.4" width="6.8" height="4.8" fill="#C4C4C4"/><path d="M14.5 5.5 L19.5 14 M19.5 5.5 L14.5 14" stroke="#ABABAB" stroke-width="1.3"/></svg>
<div id="t45" class="tx" style="position:absolute;left:1522.60px;top:143.58px;font-size:15.26px;line-height:17.05px;color:#A6A6A6;font-weight:400;white-space:nowrap;transform-origin:0 0;transform:scaleX(0.9374);">Excluir</div>
<svg style="position:absolute;left:1581.5px;top:149.0px;" width="8" height="5.5" viewBox="0 0 8 5.5"><path d="M0.9 0.9 L4.0 4.3 L7.1 0.9" stroke="#242424" stroke-width="1.3" fill="none"/></svg>
<svg style="position:absolute;left:1497px;top:172px;" width="22" height="22" viewBox="0 0 22 22"><rect x="1.2" y="3.2" width="19.6" height="18.6" fill="#fff" stroke="#2E2E2E" stroke-width="1.6"/><path d="M1 9.5 H21 M1 15.5 H21 M6.5 3 V22 M15.5 3 V22" stroke="#6A6A6A" stroke-width="1"/><rect x="6.5" y="8" width="9" height="8" fill="#62A8EA" stroke="#1E73C8" stroke-width="1.2"/><path d="M6 1.3 H16 M6 0 V3 M16 0 V3" stroke="#2B86CF" stroke-width="1.2"/></svg>
<div id="t46" class="tx" style="position:absolute;left:1522.60px;top:175.38px;font-size:15.26px;line-height:17.05px;color:#242424;font-weight:400;white-space:nowrap;transform-origin:0 0;transform:scaleX(0.9732);">Formatar</div>
<svg style="position:absolute;left:1588.0px;top:180.0px;" width="7.5" height="5.5" viewBox="0 0 7.5 5.5"><path d="M0.9 0.9 L3.75 4.3 L6.6 0.9" stroke="#242424" stroke-width="1.3" fill="none"/></svg>
<svg style="position:absolute;left:1634px;top:109px;" width="18" height="20" viewBox="0 0 18 20"><path d="M15.5 3.5 V1.2 H1.5 L9 9.5 L1.5 17.8 H15.5 V15.5" stroke="#2E2E2E" stroke-width="1.5" fill="none" stroke-linejoin="miter"/></svg>
<svg style="position:absolute;left:1662.5px;top:117.0px;" width="8" height="5.5" viewBox="0 0 8 5.5"><path d="M0.9 0.9 L4.0 4.3 L7.1 0.9" stroke="#242424" stroke-width="1.3" fill="none"/></svg>
<svg style="position:absolute;left:1632px;top:141px;" width="22" height="20" viewBox="0 0 22 20"><rect x="1" y="1" width="19.5" height="17.5" fill="#fff" stroke="#3A3A3A" stroke-width="1.5"/><rect x="1" y="1" width="19.5" height="3" fill="#3A3A3A"/><path d="M10.7 6 V14 M7 10.5 L10.7 14.3 L14.4 10.5" stroke="#1E8DD8" stroke-width="1.5" fill="none"/></svg>
<svg style="position:absolute;left:1660.5px;top:149.0px;" width="8" height="5.5" viewBox="0 0 8 5.5"><path d="M0.9 0.9 L4.0 4.3 L7.1 0.9" stroke="#242424" stroke-width="1.3" fill="none"/></svg>
<svg style="position:absolute;left:1632px;top:172px;" width="22" height="22" viewBox="0 0 22 22"><path d="M1.5 12.5 L11 3 L19.5 11.5 L10 21 Z" fill="#fff" stroke="#B74CC8" stroke-width="1.5" stroke-linejoin="round"/><path d="M1.5 12.5 L5.7 8.3 L14.2 16.8 L10 21 Z" fill="#D58AE0" stroke="#B74CC8" stroke-width="1.5" stroke-linejoin="round"/></svg>
<svg style="position:absolute;left:1660.5px;top:181.0px;" width="8" height="5.5" viewBox="0 0 8 5.5"><path d="M0.9 0.9 L4.0 4.3 L7.1 0.9" stroke="#242424" stroke-width="1.3" fill="none"/></svg>
<svg style="position:absolute;left:1696px;top:110px;" width="40" height="36" viewBox="0 0 40 36"><path d="M2.3 16 L7.5 2.4 L12.7 16 M4 11.5 H11" stroke="#A6A6A6" stroke-width="1.5" fill="none"/><path d="M2.5 19.3 H12.5 L2.3 33.6 H13" stroke="#A6A6A6" stroke-width="1.5" fill="none" stroke-linejoin="miter"/><path d="M16.8 9.6 H36.2 L28.8 18.5 V28 H24.2 V18.5 Z" fill="#E8E8E8" stroke="#A6A6A6" stroke-width="1.7" stroke-linejoin="round"/></svg>
<div id="t47" class="tx" style="position:absolute;left:1681.40px;top:152.87px;font-size:15.12px;line-height:16.89px;color:#A6A6A6;font-weight:400;white-space:nowrap;transform-origin:0 0;transform:scaleX(0.9514);">Classificar</div>
<div id="t48" class="tx" style="position:absolute;left:1682.70px;top:172.62px;font-size:15.12px;line-height:16.89px;color:#A6A6A6;font-weight:400;white-space:nowrap;transform-origin:0 0;transform:scaleX(0.9743);">e Filtrar</div>
<svg style="position:absolute;left:1738.5px;top:177.5px;" width="6.5" height="5.0" viewBox="0 0 6.5 5.0"><path d="M0.9 0.9 L3.25 3.8 L5.6 0.9" stroke="#B8B8B8" stroke-width="1.3" fill="none"/></svg>
<svg style="position:absolute;left:1777px;top:109px;" width="40" height="40" viewBox="0 0 40 40"><circle cx="24.3" cy="14.5" r="12.3" stroke="#2E2E2E" stroke-width="1.5" fill="none"/><path d="M15.5 23.5 L2 37" stroke="#2E2E2E" stroke-width="1.5"/></svg>
<div id="t49" class="tx" style="position:absolute;left:1760.80px;top:152.87px;font-size:15.12px;line-height:16.89px;color:#242424;font-weight:400;white-space:nowrap;transform-origin:0 0;transform:scaleX(0.9647);">Localizar e</div>
<div id="t50" class="tx" style="position:absolute;left:1754.50px;top:172.62px;font-size:15.12px;line-height:16.89px;color:#242424;font-weight:400;white-space:nowrap;transform-origin:0 0;transform:scaleX(0.9649);">Selecionar</div>
<svg style="position:absolute;left:1829.0px;top:177.5px;" width="7.5" height="5.3" viewBox="0 0 7.5 5.3"><path d="M0.9 0.9 L3.75 4.1 L6.6 0.9" stroke="#242424" stroke-width="1.3" fill="none"/></svg>
<svg style="position:absolute;left:1886.5px;top:204.0px;" width="11.5" height="7.0" viewBox="0 0 11.5 7.0"><path d="M0.9 0.9 L5.75 5.8 L10.6 0.9" stroke="#1F1F1F" stroke-width="1.6" fill="none"/></svg>
<svg style="position:absolute;left:20px;top:236px;" width="20" height="22" viewBox="0 0 20 22"><path d="M2 20 V1.5 H9.5 L13.5 5.5 V9" stroke="#3A3A3A" stroke-width="1.3" fill="none"/><path d="M9.5 1.5 V5.5 H13.5" stroke="#3A3A3A" stroke-width="1.1" fill="none"/><rect x="6.5" y="10.5" width="12" height="7" rx="1" fill="#fff" stroke="#3A3A3A" stroke-width="1.3"/><rect x="9" y="15" width="7" height="5.5" fill="#fff" stroke="#3A3A3A" stroke-width="1.2"/><path d="M9 10.5 V8 H16 V10.5" stroke="#3A3A3A" stroke-width="1.1" fill="none"/></svg>
<div id="t51" class="tx" style="position:absolute;left:43.20px;top:236.86px;font-size:16.28px;line-height:18.19px;color:#242424;font-weight:400;white-space:nowrap;transform-origin:0 0;transform:scaleX(0.9170);">Visualizar Impressão e Imprimir</div>
<svg style="position:absolute;left:274px;top:236px;" width="18" height="22" viewBox="0 0 18 22"><path d="M1.5 1.5 H10.5 L16 7 V20.5 H1.5 Z" stroke="#3A3A3A" stroke-width="1.3" fill="#fff" stroke-linejoin="round"/><path d="M10.5 1.5 V7 H16" stroke="#3A3A3A" stroke-width="1.2" fill="none"/></svg>
<div id="t52" class="tx" style="position:absolute;left:297.50px;top:236.86px;font-size:16.28px;line-height:18.19px;color:#242424;font-weight:400;white-space:nowrap;transform-origin:0 0;transform:scaleX(0.9372);">Novo</div>
<svg style="position:absolute;left:358px;top:240px;" width="12" height="11" viewBox="0 0 12 11"><path d="M1 1 H11" stroke="#3A3A3A" stroke-width="1.2"/><path d="M1.8 4.5 L6 8.7 L10.2 4.5" stroke="#3A3A3A" stroke-width="1.3" fill="none"/></svg>
<div style="position:absolute;left:11px;top:277px;width:125px;height:28px;box-sizing:border-box;background:#fff;border-radius:5px;box-shadow:0 0 0 1px #E3E3E3"></div>
<div id="t53" class="tx" style="position:absolute;left:16.70px;top:283.63px;font-size:15.99px;line-height:17.86px;color:#242424;font-weight:400;white-space:nowrap;transform-origin:0 0;transform:scaleX(0.9457);">B6</div>
<svg style="position:absolute;left:119.0px;top:289.5px;" width="11" height="7.0" viewBox="0 0 11 7.0"><path d="M0.9 0.9 L5.5 5.8 L10.1 0.9" stroke="#242424" stroke-width="1.6" fill="none"/></svg>
<div style="position:absolute;left:148px;top:286px;width:3px;height:3px;background:#3A3A3A;border-radius:1px"></div>
<div style="position:absolute;left:148px;top:291px;width:3px;height:3px;background:#3A3A3A;border-radius:1px"></div>
<div style="position:absolute;left:148px;top:296px;width:3px;height:3px;background:#3A3A3A;border-radius:1px"></div>
<div style="position:absolute;left:163px;top:277px;width:90px;height:28px;box-sizing:border-box;background:#fff;border-radius:5px;box-shadow:0 0 0 1px #E6E6E6"></div>
<svg style="position:absolute;left:170px;top:283px;" width="17" height="17" viewBox="0 0 17 17"><path d="M1.5 1.5 L15 15 M15 1.5 L1.5 15" stroke="#ABABAB" stroke-width="1.3"/></svg>
<svg style="position:absolute;left:197px;top:283px;" width="22" height="16" viewBox="0 0 22 16"><path d="M1.5 8.5 L7.5 14.2 L20.5 1.3" stroke="#ABABAB" stroke-width="1.3" fill="none"/></svg>
<div style="position:absolute;left:229px;top:279px;font-family:'Liberation Serif',serif;font-style:italic;font-size:21px;line-height:21px;color:#2A2A2A;letter-spacing:-1px">fx</div>
<div style="position:absolute;left:260px;top:277px;width:1650px;height:28px;box-sizing:border-box;background:#fff;border-radius:5px;box-shadow:0 0 0 1px #E6E6E6"></div>
<div id="t54" class="tx" style="position:absolute;left:272.50px;top:283.63px;font-size:15.99px;line-height:17.86px;color:#242424;font-weight:400;white-space:nowrap;transform-origin:0 0;transform:scaleX(0.9784);">Serviço 1</div>
<svg style="position:absolute;left:1892.5px;top:287.0px;" width="11.5" height="7.0" viewBox="0 0 11.5 7.0"><path d="M0.9 0.9 L5.75 5.8 L10.6 0.9" stroke="#242424" stroke-width="1.6" fill="none"/></svg>
<div style="position:absolute;left:0;top:305px;width:1920px;height:747px;background:linear-gradient(90deg,#EBE4E7 0%,#E9E5EA 40%,#E7E6EE 100%)"></div>
<div style="position:absolute;left:0px;top:314px;width:1894px;height:698px;background:#FFFFFF"></div>
<div style="position:absolute;left:0px;top:314px;width:1894px;height:23px;background:#F0F0F0"></div>
<div style="position:absolute;left:44px;top:314px;width:274px;height:23px;background:#E1E1E1"></div>
<div style="position:absolute;left:0px;top:336px;width:1894px;height:1px;background:#DADADA"></div>
<div style="position:absolute;left:44px;top:335px;width:274px;height:2px;background:#1E6B41"></div>
<svg style="position:absolute;left:14px;top:319px;" width="16" height="15" viewBox="0 0 16 15"><path d="M15 0 L15 15 L0 15 Z" fill="#D6D6D6"/></svg>
<div style="position:absolute;left:44px;top:314px;width:1px;height:23px;background:#DCDCDC"></div>
<div style="position:absolute;left:318px;top:314px;width:1px;height:23px;background:#DCDCDC"></div>
<div style="position:absolute;left:592px;top:314px;width:1px;height:23px;background:#DCDCDC"></div>
<div style="position:absolute;left:866px;top:314px;width:1px;height:23px;background:#DCDCDC"></div>
<div style="position:absolute;left:984px;top:314px;width:1px;height:23px;background:#D2D2D2"></div>
<div style="position:absolute;left:988px;top:314px;width:1px;height:23px;background:#D2D2D2"></div>
<div style="position:absolute;left:1089px;top:314px;width:1px;height:23px;background:#DCDCDC"></div>
<div style="position:absolute;left:1215px;top:314px;width:1px;height:23px;background:#DCDCDC"></div>
<div style="position:absolute;left:1353px;top:314px;width:1px;height:23px;background:#DCDCDC"></div>
<div style="position:absolute;left:1645px;top:314px;width:1px;height:23px;background:#DCDCDC"></div>
<div style="position:absolute;left:318px;top:314px;width:1px;height:23px;background:#9A9A9A"></div>
<div id="t55" class="tx" style="position:absolute;left:34.00px;top:317.10px;font-size:17.01px;line-height:19.00px;color:#444444;font-weight:400;white-space:nowrap;transform-origin:0 0;transform:scaleX(0.8022);">A</div>
<div id="t56" class="tx" style="position:absolute;left:176.70px;top:317.10px;font-size:17.01px;line-height:19.00px;color:#1E6B41;font-weight:400;white-space:nowrap;transform-origin:0 0;transform:scaleX(0.8639);">B</div>
<div id="t57" class="tx" style="position:absolute;left:449.00px;top:317.10px;font-size:17.01px;line-height:19.00px;color:#444444;font-weight:400;white-space:nowrap;transform-origin:0 0;transform:scaleX(0.9608);">C</div>
<div id="t58" class="tx" style="position:absolute;left:723.00px;top:317.10px;font-size:17.01px;line-height:19.00px;color:#444444;font-weight:400;white-space:nowrap;transform-origin:0 0;transform:scaleX(1.0422);">D</div>
<div id="t59" class="tx" style="position:absolute;left:921.70px;top:317.10px;font-size:17.01px;line-height:19.00px;color:#444444;font-weight:400;white-space:nowrap;transform-origin:0 0;transform:scaleX(0.7758);">E</div>
<div id="t60" class="tx" style="position:absolute;left:1030.70px;top:317.10px;font-size:17.01px;line-height:19.00px;color:#444444;font-weight:400;white-space:nowrap;transform-origin:0 0;transform:scaleX(0.9898);">G</div>
<div id="t61" class="tx" style="position:absolute;left:1146.30px;top:317.10px;font-size:17.01px;line-height:19.00px;color:#444444;font-weight:400;white-space:nowrap;transform-origin:0 0;transform:scaleX(0.9608);">H</div>
<div id="t62" class="tx" style="position:absolute;left:1282.00px;top:317.10px;font-size:17.01px;line-height:19.00px;color:#444444;font-weight:400;white-space:nowrap;transform-origin:0 0;transform:scaleX(0.8026);">I</div>
<div id="t63" class="tx" style="position:absolute;left:1495.70px;top:317.10px;font-size:17.01px;line-height:19.00px;color:#444444;font-weight:400;white-space:nowrap;transform-origin:0 0;transform:scaleX(0.8000);">J</div>
<div style="position:absolute;left:0px;top:337px;width:33px;height:675px;background:#F0F0F0"></div>
<div style="position:absolute;left:33px;top:337px;width:1px;height:675px;background:#C8C8C8"></div>
<div style="position:absolute;left:0px;top:533px;width:33px;height:41px;background:#E1E1E1"></div>
<div style="position:absolute;left:32px;top:533px;width:2px;height:41px;background:#1E6B41"></div>
<div style="position:absolute;left:0px;top:358px;width:33px;height:1px;background:#D4D4D4"></div>
<div style="position:absolute;left:0px;top:408px;width:33px;height:1px;background:#D4D4D4"></div>
<div style="position:absolute;left:0px;top:459px;width:33px;height:1px;background:#D4D4D4"></div>
<div style="position:absolute;left:0px;top:484px;width:33px;height:1px;background:#D4D4D4"></div>
<div style="position:absolute;left:0px;top:533px;width:33px;height:1px;background:#D4D4D4"></div>
<div style="position:absolute;left:0px;top:574px;width:33px;height:1px;background:#D4D4D4"></div>
<div style="position:absolute;left:0px;top:615px;width:33px;height:1px;background:#D4D4D4"></div>
<div style="position:absolute;left:0px;top:656px;width:33px;height:1px;background:#D4D4D4"></div>
<div style="position:absolute;left:0px;top:697px;width:33px;height:1px;background:#D4D4D4"></div>
<div style="position:absolute;left:0px;top:738px;width:33px;height:1px;background:#D4D4D4"></div>
<div style="position:absolute;left:0px;top:779px;width:33px;height:1px;background:#D4D4D4"></div>
<div style="position:absolute;left:0px;top:820px;width:33px;height:1px;background:#D4D4D4"></div>
<div style="position:absolute;left:0px;top:861px;width:33px;height:1px;background:#D4D4D4"></div>
<div style="position:absolute;left:0px;top:902px;width:33px;height:1px;background:#D4D4D4"></div>
<div style="position:absolute;left:0px;top:943px;width:33px;height:1px;background:#D4D4D4"></div>
<div style="position:absolute;left:0px;top:984px;width:33px;height:1px;background:#D4D4D4"></div>
<div style="position:absolute;left:0px;top:1025px;width:33px;height:1px;background:#D4D4D4"></div>
<div id="t64" class="tx" style="position:absolute;left:11.70px;top:340.34px;font-size:16.86px;line-height:18.84px;color:#444444;font-weight:400;white-space:nowrap;transform-origin:0 0;transform:scaleX(0.8945);">1</div>
<div id="t65" class="tx" style="position:absolute;left:11.70px;top:390.34px;font-size:16.86px;line-height:18.84px;color:#444444;font-weight:400;white-space:nowrap;transform-origin:0 0;transform:scaleX(0.8945);">2</div>
<div id="t66" class="tx" style="position:absolute;left:11.70px;top:441.34px;font-size:16.86px;line-height:18.84px;color:#444444;font-weight:400;white-space:nowrap;transform-origin:0 0;transform:scaleX(0.8945);">3</div>
<div id="t67" class="tx" style="position:absolute;left:11.70px;top:466.34px;font-size:16.86px;line-height:18.84px;color:#444444;font-weight:400;white-space:nowrap;transform-origin:0 0;transform:scaleX(0.8945);">4</div>
<div id="t68" class="tx" style="position:absolute;left:11.70px;top:515.34px;font-size:16.86px;line-height:18.84px;color:#444444;font-weight:400;white-space:nowrap;transform-origin:0 0;transform:scaleX(0.8945);">5</div>
<div id="t69" class="tx" style="position:absolute;left:11.70px;top:556.34px;font-size:16.86px;line-height:18.84px;color:#1E6B41;font-weight:400;white-space:nowrap;transform-origin:0 0;transform:scaleX(0.8945);">6</div>
<div id="t70" class="tx" style="position:absolute;left:11.70px;top:597.34px;font-size:16.86px;line-height:18.84px;color:#444444;font-weight:400;white-space:nowrap;transform-origin:0 0;transform:scaleX(0.8945);">7</div>
<div id="t71" class="tx" style="position:absolute;left:11.70px;top:638.34px;font-size:16.86px;line-height:18.84px;color:#444444;font-weight:400;white-space:nowrap;transform-origin:0 0;transform:scaleX(0.8945);">8</div>
<div id="t72" class="tx" style="position:absolute;left:11.70px;top:679.34px;font-size:16.86px;line-height:18.84px;color:#444444;font-weight:400;white-space:nowrap;transform-origin:0 0;transform:scaleX(0.8945);">9</div>
<div id="t73" class="tx" style="position:absolute;left:8.00px;top:720.34px;font-size:16.86px;line-height:18.84px;color:#444444;font-weight:400;white-space:nowrap;transform-origin:0 0;transform:scaleX(0.8953);">10</div>
<div id="t74" class="tx" style="position:absolute;left:8.00px;top:761.34px;font-size:16.86px;line-height:18.84px;color:#444444;font-weight:400;white-space:nowrap;transform-origin:0 0;transform:scaleX(0.9591);">11</div>
<div id="t75" class="tx" style="position:absolute;left:8.00px;top:802.34px;font-size:16.86px;line-height:18.84px;color:#444444;font-weight:400;white-space:nowrap;transform-origin:0 0;transform:scaleX(0.8953);">12</div>
<div id="t76" class="tx" style="position:absolute;left:8.00px;top:843.34px;font-size:16.86px;line-height:18.84px;color:#444444;font-weight:400;white-space:nowrap;transform-origin:0 0;transform:scaleX(0.8953);">13</div>
<div id="t77" class="tx" style="position:absolute;left:8.00px;top:884.34px;font-size:16.86px;line-height:18.84px;color:#444444;font-weight:400;white-space:nowrap;transform-origin:0 0;transform:scaleX(0.8953);">14</div>
<div id="t78" class="tx" style="position:absolute;left:8.00px;top:925.34px;font-size:16.86px;line-height:18.84px;color:#444444;font-weight:400;white-space:nowrap;transform-origin:0 0;transform:scaleX(0.8953);">15</div>
<div id="t79" class="tx" style="position:absolute;left:8.00px;top:966.34px;font-size:16.86px;line-height:18.84px;color:#444444;font-weight:400;white-space:nowrap;transform-origin:0 0;transform:scaleX(0.8953);">16</div>
<div id="t80" class="tx" style="position:absolute;left:8.00px;top:1007.34px;font-size:16.86px;line-height:18.84px;color:#444444;font-weight:400;white-space:nowrap;transform-origin:0 0;transform:scaleX(0.8953);">17</div>
<div style="position:absolute;left:1089px;top:533px;width:126px;height:479px;background:#F2F2F2"></div>
<div style="position:absolute;left:1353px;top:533px;width:541px;height:479px;background:#F2F2F2"></div>
<div style="position:absolute;left:1353px;top:656px;width:292px;height:41px;background:#FFFFFF"></div>
<div style="position:absolute;left:1353px;top:820px;width:292px;height:41px;background:#FFFFFF"></div>
<div style="position:absolute;left:44px;top:574px;width:1850px;height:1px;background:#D9D9D9"></div>
<div style="position:absolute;left:44px;top:615px;width:1850px;height:1px;background:#D9D9D9"></div>
<div style="position:absolute;left:44px;top:656px;width:1850px;height:1px;background:#D9D9D9"></div>
<div style="position:absolute;left:44px;top:697px;width:1850px;height:1px;background:#D9D9D9"></div>
<div style="position:absolute;left:44px;top:738px;width:1850px;height:1px;background:#D9D9D9"></div>
<div style="position:absolute;left:44px;top:779px;width:1850px;height:1px;background:#D9D9D9"></div>
<div style="position:absolute;left:44px;top:820px;width:1850px;height:1px;background:#D9D9D9"></div>
<div style="position:absolute;left:44px;top:861px;width:1850px;height:1px;background:#D9D9D9"></div>
<div style="position:absolute;left:44px;top:902px;width:1850px;height:1px;background:#D9D9D9"></div>
<div style="position:absolute;left:44px;top:943px;width:1850px;height:1px;background:#D9D9D9"></div>
<div style="position:absolute;left:44px;top:984px;width:1850px;height:1px;background:#D9D9D9"></div>
<div style="position:absolute;left:44px;top:1025px;width:1850px;height:1px;background:#D9D9D9"></div>
<div style="position:absolute;left:44px;top:533px;width:1px;height:479px;background:#D9D9D9"></div>
<div style="position:absolute;left:318px;top:533px;width:1px;height:479px;background:#D9D9D9"></div>
<div style="position:absolute;left:592px;top:533px;width:1px;height:479px;background:#D9D9D9"></div>
<div style="position:absolute;left:866px;top:533px;width:1px;height:479px;background:#D9D9D9"></div>
<div style="position:absolute;left:986px;top:533px;width:1px;height:479px;background:#D9D9D9"></div>
<div style="position:absolute;left:1089px;top:533px;width:1px;height:479px;background:#D9D9D9"></div>
<div style="position:absolute;left:1215px;top:533px;width:1px;height:479px;background:#D9D9D9"></div>
<div style="position:absolute;left:1353px;top:533px;width:1px;height:479px;background:#D9D9D9"></div>
<div style="position:absolute;left:1645px;top:533px;width:1px;height:479px;background:#D9D9D9"></div>
<div style="position:absolute;left:1216px;top:533px;width:137px;height:41px;background:#009E57"></div>
<div style="position:absolute;left:1216px;top:575px;width:137px;height:40px;background:#009E57"></div>
<div style="position:absolute;left:1216px;top:574px;width:137px;height:1px;background:#A6EBC6"></div>
<div style="position:absolute;left:1216px;top:616px;width:137px;height:40px;background:#009E57"></div>
<div style="position:absolute;left:1216px;top:615px;width:137px;height:1px;background:#A6EBC6"></div>
<div style="position:absolute;left:1216px;top:657px;width:137px;height:40px;background:#C00000"></div>
<div style="position:absolute;left:1216px;top:656px;width:137px;height:1px;background:#EFE2CF"></div>
<div style="position:absolute;left:1216px;top:698px;width:137px;height:40px;background:#009E57"></div>
<div style="position:absolute;left:1216px;top:697px;width:137px;height:1px;background:#EFE2CF"></div>
<div style="position:absolute;left:1216px;top:739px;width:137px;height:40px;background:#009E57"></div>
<div style="position:absolute;left:1216px;top:738px;width:137px;height:1px;background:#A6EBC6"></div>
<div style="position:absolute;left:1216px;top:780px;width:137px;height:40px;background:#009E57"></div>
<div style="position:absolute;left:1216px;top:779px;width:137px;height:1px;background:#A6EBC6"></div>
<div style="position:absolute;left:1216px;top:821px;width:137px;height:40px;background:#C00000"></div>
<div style="position:absolute;left:1216px;top:820px;width:137px;height:1px;background:#EFE2CF"></div>
<div style="position:absolute;left:1216px;top:862px;width:137px;height:40px;background:#009E57"></div>
<div style="position:absolute;left:1216px;top:861px;width:137px;height:1px;background:#EFE2CF"></div>
<div style="position:absolute;left:1216px;top:903px;width:137px;height:40px;background:#009E57"></div>
<div style="position:absolute;left:1216px;top:902px;width:137px;height:1px;background:#A6EBC6"></div>
<div style="position:absolute;left:44px;top:337px;width:1850px;height:71px;background:#009E57"></div>
<div style="position:absolute;left:44px;top:408px;width:1850px;height:51px;background:#F2F2F2"></div>
<div style="position:absolute;left:197px;top:426px;width:158px;height:33px;background:#FFFFFF"></div>
<div style="position:absolute;left:358px;top:379px;width:160px;height:29px;background:#F2F2F2"></div>
<div style="position:absolute;left:46px;top:485px;width:271px;height:48px;background:#A6A6A6"></div>
<div style="position:absolute;left:320px;top:485px;width:271px;height:48px;background:#A6A6A6"></div>
<div style="position:absolute;left:594px;top:485px;width:271px;height:48px;background:#A6A6A6"></div>
<div style="position:absolute;left:868px;top:485px;width:117px;height:48px;background:#A6A6A6"></div>
<div style="position:absolute;left:988px;top:485px;width:100px;height:48px;background:#A6A6A6"></div>
<div style="position:absolute;left:1091px;top:485px;width:123px;height:48px;background:#A6A6A6"></div>
<div style="position:absolute;left:1217px;top:485px;width:135px;height:48px;background:#A6A6A6"></div>
<div style="position:absolute;left:1355px;top:485px;width:289px;height:48px;background:#A6A6A6"></div>
<div style="position:absolute;left:1647px;top:485px;width:246px;height:48px;background:#A6A6A6"></div>
<svg style="position:absolute;left:44px;top:350px;" width="48" height="40" viewBox="0 0 48 40">
<g stroke="#F4FFF8" fill="none" stroke-width="1.6">
<path d="M3.1 26.6 H40.9"/>
<path d="M22 4 C28.5 4 33 8.5 32.6 16 C32 23 26.5 30 22 33.6 C17.5 30 12 23 11.4 16 C11 8.5 15.5 4 22 4 Z"/>
<path d="M9.6 7.6 Q10.5 10 12.6 9.6 M34.4 7.6 Q33.5 10 31.4 9.6"/>
<circle cx="16.5" cy="14" r="2.9"/><circle cx="26.9" cy="14" r="2.9"/>
<path d="M13 10.5 Q16.5 7 20.5 10.5 L22 12 L23.5 10.5 Q27 7 30.5 10.5"/>
<path d="M22 11 V16.8"/><path d="M22 28.8 V31"/>
</g>
<circle cx="16.5" cy="14" r="1" fill="#9FD9B8"/><circle cx="26.9" cy="14" r="1" fill="#9FD9B8"/>
</svg>
<div id="t81" class="tx" style="position:absolute;left:91.50px;top:354.74px;font-size:27.91px;line-height:31.18px;color:#F4FFF8;font-weight:400;white-space:nowrap;transform-origin:0 0;font-style:italic;font-weight:300;transform:scaleX(0.9416);">VIZUAL</div>
<div id="t82" class="tx" style="position:absolute;left:44.40px;top:387.76px;font-size:7.56px;line-height:8.44px;color:#F4FFF8;font-weight:700;white-space:nowrap;transform-origin:0 0;transform:scaleX(1.0454);">PLANILHAS EMPRESARIAIS</div>
<div style="position:absolute;left:159.5px;top:391.3px;width:23px;height:2.4px;background:#F4FFF8"></div>
<svg style="position:absolute;left:265px;top:347px;" width="29" height="28" viewBox="0 0 29 28"><path d="M2 26 L3.5 19.5 L19.5 3.5 Q21.5 1.5 23.5 3.5 L24.5 4.5 Q26.5 6.5 24.5 8.5 L8.5 24.5 Z" fill="#F4FFF8"/><path d="M4.5 20.5 L7.5 23.5" stroke="#009E57" stroke-width="1.2"/><path d="M17.5 5.5 L22.5 10.5" stroke="#009E57" stroke-width="1.2"/></svg>
<svg style="position:absolute;left:422px;top:347px;" width="30" height="28" viewBox="0 0 30 28"><circle cx="14.3" cy="14.8" r="11.6" stroke="#F4FFF8" stroke-width="2.3" fill="none"/><circle cx="14.3" cy="14.8" r="7" stroke="#F4FFF8" stroke-width="2.1" fill="none"/><circle cx="14.3" cy="14.8" r="3.1" fill="#F4FFF8"/><path d="M14.3 14.8 L24 5" stroke="#009E57" stroke-width="3.6"/><path d="M14.3 14.8 L24.5 4.5" stroke="#F4FFF8" stroke-width="1.8"/><path d="M21.5 3.5 L23 1 L24.3 4.2 L27.6 5.5 L25 7 Z" fill="#F4FFF8"/></svg>
<svg style="position:absolute;left:591px;top:352px;" width="24" height="24" viewBox="0 0 24 24"><rect x="0" y="0" width="23.5" height="3" fill="#F4FFF8"/><rect x="0" y="4" width="23.5" height="19.5" fill="#F4FFF8"/><rect x="2.3" y="6.2" width="2.6" height="2.6" fill="#009E57"/><rect x="6.4" y="6.2" width="2.6" height="2.6" fill="#009E57"/><rect x="10.5" y="6.2" width="2.6" height="2.6" fill="#009E57"/><rect x="14.6" y="6.2" width="2.6" height="2.6" fill="#009E57"/><rect x="18.7" y="6.2" width="2.6" height="2.6" fill="#009E57"/><rect x="2.3" y="10.3" width="2.6" height="2.6" fill="#009E57"/><rect x="6.4" y="10.3" width="2.6" height="2.6" fill="#009E57"/><rect x="10.5" y="10.3" width="2.6" height="2.6" fill="#009E57"/><rect x="14.6" y="10.3" width="2.6" height="2.6" fill="#009E57"/><rect x="18.7" y="10.3" width="2.6" height="2.6" fill="#009E57"/><rect x="2.3" y="14.4" width="2.6" height="2.6" fill="#009E57"/><rect x="6.4" y="14.4" width="2.6" height="2.6" fill="#009E57"/><rect x="10.5" y="14.4" width="2.6" height="2.6" fill="#009E57"/><rect x="14.6" y="14.4" width="2.6" height="2.6" fill="#009E57"/><rect x="18.7" y="14.4" width="2.6" height="2.6" fill="#009E57"/><rect x="2.3" y="18.5" width="2.6" height="2.6" fill="#009E57"/><rect x="6.4" y="18.5" width="2.6" height="2.6" fill="#009E57"/><rect x="10.5" y="18.5" width="2.6" height="2.6" fill="#009E57"/></svg>
<svg style="position:absolute;left:755px;top:347px;" width="24" height="28" viewBox="0 0 24 28"><path d="M1.2 1.2 H14.5 L22.5 9.2 V26.5 H1.2 Z" stroke="#F4FFF8" stroke-width="2.2" fill="none" stroke-linejoin="miter"/><path d="M14 1.5 V9.7 H22" stroke="#F4FFF8" stroke-width="2" fill="none"/><rect x="5.5" y="10" width="3" height="1.3" fill="#F4FFF8"/><rect x="5.5" y="13" width="13" height="1.6" fill="#F4FFF8"/><rect x="5.5" y="16.3" width="13" height="1.6" fill="#F4FFF8"/><rect x="5.5" y="19.6" width="13" height="1.6" fill="#F4FFF8"/></svg>
<svg style="position:absolute;left:916px;top:347px;" width="27" height="28" viewBox="0 0 27 28"><rect x="11" y="0.8" width="15" height="10.2" fill="#F4FFF8"/><path d="M13 10.5 L14.5 13.5 L17 10.5 Z" fill="#F4FFF8"/><text x="15.6" y="8.8" font-size="8.5" font-family="Liberation Sans" fill="#2A2A2A">?</text><circle cx="7.7" cy="13.2" r="3.3" fill="#F4FFF8"/><path d="M1 23 Q1 17 7.5 17 Q11 17 12.5 19.5 L12 23 Z" fill="#F4FFF8"/><circle cx="15.5" cy="17.6" r="3.3" fill="#F4FFF8"/><path d="M9.5 27.4 Q9.5 21.8 16 21.8 Q22 21.8 22 27.4 Z" fill="#F4FFF8"/></svg>
<div id="t83" class="tx" style="position:absolute;left:232.30px;top:387.85px;font-size:14.97px;line-height:16.73px;color:#F4FFF8;font-weight:700;white-space:nowrap;transform-origin:0 0;transform:scaleX(0.9855);">CADASTRO</div>
<div id="t84" class="tx" style="position:absolute;left:377.60px;top:387.85px;font-size:14.97px;line-height:16.73px;color:#0D0D0D;font-weight:700;white-space:nowrap;transform-origin:0 0;transform:scaleX(1.0193);">LANÇAMENTOS</div>
<div id="t85" class="tx" style="position:absolute;left:568.40px;top:387.85px;font-size:14.97px;line-height:16.73px;color:#F4FFF8;font-weight:700;white-space:nowrap;transform-origin:0 0;transform:scaleX(1.0235);">AGENDA</div>
<div id="t86" class="tx" style="position:absolute;left:720.70px;top:387.85px;font-size:14.97px;line-height:16.73px;color:#F4FFF8;font-weight:700;white-space:nowrap;transform-origin:0 0;transform:scaleX(0.9873);">RELATÓRIOS</div>
<div id="t87" class="tx" style="position:absolute;left:903.10px;top:387.85px;font-size:14.97px;line-height:16.73px;color:#F4FFF8;font-weight:700;white-space:nowrap;transform-origin:0 0;transform:scaleX(1.0082);">AJUDA</div>
<div id="t88" class="tx" style="position:absolute;left:1824.70px;top:345.07px;font-size:14.39px;line-height:16.08px;color:#F4FFF8;font-weight:400;white-space:nowrap;transform-origin:0 0;transform:scaleX(0.9445);">versão 6.0</div>
<div id="t89" class="tx" style="position:absolute;left:239.70px;top:437.85px;font-size:15.41px;line-height:17.21px;color:#1F1F1F;font-weight:700;white-space:nowrap;transform-origin:0 0;transform:scaleX(0.9377);">SERVIÇOS</div>
<div id="t90" class="tx" style="position:absolute;left:106.75px;top:501.00px;font-size:16.35px;line-height:18.27px;color:#3F3F3F;font-weight:700;white-space:nowrap;transform-origin:0 0;-webkit-text-stroke:0.35px #3F3F3F;transform:scaleX(0.8930);">SERVIÇO PRESTADO</div>
<div id="t91" class="tx" style="position:absolute;left:423.96px;top:501.00px;font-size:16.35px;line-height:18.27px;color:#3F3F3F;font-weight:700;white-space:nowrap;transform-origin:0 0;-webkit-text-stroke:0.35px #3F3F3F;transform:scaleX(0.8820);">CLIENTE</div>
<div id="t92" class="tx" style="position:absolute;left:672.80px;top:501.00px;font-size:16.35px;line-height:18.27px;color:#3F3F3F;font-weight:700;white-space:nowrap;transform-origin:0 0;-webkit-text-stroke:0.35px #3F3F3F;transform:scaleX(0.9100);">RESPONSÁVEL</div>
<div id="t93" class="tx" style="position:absolute;left:905.79px;top:501.00px;font-size:16.35px;line-height:18.27px;color:#3F3F3F;font-weight:700;white-space:nowrap;transform-origin:0 0;-webkit-text-stroke:0.35px #3F3F3F;transform:scaleX(0.9500);">DATA</div>
<div id="t94" class="tx" style="position:absolute;left:1002.38px;top:501.00px;font-size:16.35px;line-height:18.27px;color:#3F3F3F;font-weight:700;white-space:nowrap;transform-origin:0 0;-webkit-text-stroke:0.35px #3F3F3F;transform:scaleX(0.9100);">HORÁRIO</div>
<div id="t95" class="tx" style="position:absolute;left:1134.29px;top:501.00px;font-size:16.35px;line-height:18.27px;color:#3F3F3F;font-weight:700;white-space:nowrap;transform-origin:0 0;-webkit-text-stroke:0.35px #3F3F3F;transform:scaleX(0.9180);">TIPO</div>
<div id="t96" class="tx" style="position:absolute;left:1255.05px;top:501.00px;font-size:16.35px;line-height:18.27px;color:#3F3F3F;font-weight:700;white-space:nowrap;transform-origin:0 0;-webkit-text-stroke:0.35px #3F3F3F;transform:scaleX(0.9260);">STATUS</div>
<div id="t97" class="tx" style="position:absolute;left:1374.06px;top:501.00px;font-size:16.35px;line-height:18.27px;color:#3F3F3F;font-weight:700;white-space:nowrap;transform-origin:0 0;-webkit-text-stroke:0.35px #3F3F3F;transform:scaleX(0.9370);">MOTIVO PARA NÃO REALIZAÇÃO</div>
<svg style="position:absolute;left:298px;top:512px;" width="19" height="19" viewBox="0 0 19 19"><defs><linearGradient id="fg" x1="0" y1="0" x2="0" y2="1"><stop offset="0" stop-color="#FFFFFF"/><stop offset="1" stop-color="#EEF0F4"/></linearGradient></defs><rect x="0.5" y="0.5" width="18" height="18" fill="url(#fg)" stroke="#C9C9C9" stroke-width="1"/><path d="M5.8 7.8 H13.2 L9.5 12 Z" fill="#5E5E5E"/></svg>
<svg style="position:absolute;left:572px;top:512px;" width="19" height="19" viewBox="0 0 19 19"><defs><linearGradient id="fg" x1="0" y1="0" x2="0" y2="1"><stop offset="0" stop-color="#FFFFFF"/><stop offset="1" stop-color="#EEF0F4"/></linearGradient></defs><rect x="0.5" y="0.5" width="18" height="18" fill="url(#fg)" stroke="#C9C9C9" stroke-width="1"/><path d="M5.8 7.8 H13.2 L9.5 12 Z" fill="#5E5E5E"/></svg>
<svg style="position:absolute;left:846px;top:512px;" width="19" height="19" viewBox="0 0 19 19"><defs><linearGradient id="fg" x1="0" y1="0" x2="0" y2="1"><stop offset="0" stop-color="#FFFFFF"/><stop offset="1" stop-color="#EEF0F4"/></linearGradient></defs><rect x="0.5" y="0.5" width="18" height="18" fill="url(#fg)" stroke="#C9C9C9" stroke-width="1"/><path d="M5.8 7.8 H13.2 L9.5 12 Z" fill="#5E5E5E"/></svg>
<svg style="position:absolute;left:966px;top:512px;" width="19" height="19" viewBox="0 0 19 19"><defs><linearGradient id="fg" x1="0" y1="0" x2="0" y2="1"><stop offset="0" stop-color="#FFFFFF"/><stop offset="1" stop-color="#EEF0F4"/></linearGradient></defs><rect x="0.5" y="0.5" width="18" height="18" fill="url(#fg)" stroke="#C9C9C9" stroke-width="1"/><path d="M5.8 7.8 H13.2 L9.5 12 Z" fill="#5E5E5E"/></svg>
<svg style="position:absolute;left:1069px;top:512px;" width="19" height="19" viewBox="0 0 19 19"><defs><linearGradient id="fg" x1="0" y1="0" x2="0" y2="1"><stop offset="0" stop-color="#FFFFFF"/><stop offset="1" stop-color="#EEF0F4"/></linearGradient></defs><rect x="0.5" y="0.5" width="18" height="18" fill="url(#fg)" stroke="#C9C9C9" stroke-width="1"/><path d="M5.8 7.8 H13.2 L9.5 12 Z" fill="#5E5E5E"/></svg>
<svg style="position:absolute;left:1195px;top:512px;" width="19" height="19" viewBox="0 0 19 19"><defs><linearGradient id="fg" x1="0" y1="0" x2="0" y2="1"><stop offset="0" stop-color="#FFFFFF"/><stop offset="1" stop-color="#EEF0F4"/></linearGradient></defs><rect x="0.5" y="0.5" width="18" height="18" fill="url(#fg)" stroke="#C9C9C9" stroke-width="1"/><path d="M5.8 7.8 H13.2 L9.5 12 Z" fill="#5E5E5E"/></svg>
<svg style="position:absolute;left:1333px;top:512px;" width="19" height="19" viewBox="0 0 19 19"><defs><linearGradient id="fg" x1="0" y1="0" x2="0" y2="1"><stop offset="0" stop-color="#FFFFFF"/><stop offset="1" stop-color="#EEF0F4"/></linearGradient></defs><rect x="0.5" y="0.5" width="18" height="18" fill="url(#fg)" stroke="#C9C9C9" stroke-width="1"/><path d="M5.8 7.8 H13.2 L9.5 12 Z" fill="#5E5E5E"/></svg>
<svg style="position:absolute;left:1625px;top:512px;" width="19" height="19" viewBox="0 0 19 19"><defs><linearGradient id="fg" x1="0" y1="0" x2="0" y2="1"><stop offset="0" stop-color="#FFFFFF"/><stop offset="1" stop-color="#EEF0F4"/></linearGradient></defs><rect x="0.5" y="0.5" width="18" height="18" fill="url(#fg)" stroke="#C9C9C9" stroke-width="1"/><path d="M5.8 7.8 H13.2 L9.5 12 Z" fill="#5E5E5E"/></svg>
<div id="t98" class="tx" style="position:absolute;left:147.78px;top:546.40px;font-size:15.63px;line-height:17.46px;color:#1A1A1A;font-weight:400;white-space:nowrap;transform-origin:0 0;transform:scaleX(1.0200);">Serviço 1</div>
<div id="t99" class="tx" style="position:absolute;left:423.55px;top:546.40px;font-size:15.63px;line-height:17.46px;color:#1A1A1A;font-weight:400;white-space:nowrap;transform-origin:0 0;transform:scaleX(1.0200);">Cliente 1</div>
<div id="t100" class="tx" style="position:absolute;left:680.71px;top:546.40px;font-size:15.63px;line-height:17.46px;color:#1A1A1A;font-weight:400;white-space:nowrap;transform-origin:0 0;transform:scaleX(1.0200);">Funcionário 1</div>
<div id="t101" class="tx" style="position:absolute;left:883.77px;top:546.40px;font-size:15.63px;line-height:17.46px;color:#1A1A1A;font-weight:400;white-space:nowrap;transform-origin:0 0;transform:scaleX(1.0800);">02/01/2023</div>
<div id="t102" class="tx" style="position:absolute;left:1019.77px;top:546.40px;font-size:15.63px;line-height:17.46px;color:#1A1A1A;font-weight:400;white-space:nowrap;transform-origin:0 0;transform:scaleX(1.0200);">7h30</div>
<div id="t103" class="tx" style="position:absolute;left:1127.63px;top:546.40px;font-size:15.63px;line-height:17.46px;color:#1A1A1A;font-weight:400;white-space:nowrap;transform-origin:0 0;transform:scaleX(1.0200);">Manhã</div>
<div id="t104" class="tx" style="position:absolute;left:1248.86px;top:546.40px;font-size:15.63px;line-height:17.46px;color:#F2FFF6;font-weight:400;white-space:nowrap;transform-origin:0 0;transform:scaleX(1.0200);">Realizado</div>
<div id="t105" class="tx" style="position:absolute;left:147.78px;top:587.40px;font-size:15.63px;line-height:17.46px;color:#1A1A1A;font-weight:400;white-space:nowrap;transform-origin:0 0;transform:scaleX(1.0200);">Serviço 2</div>
<div id="t106" class="tx" style="position:absolute;left:423.55px;top:587.40px;font-size:15.63px;line-height:17.46px;color:#1A1A1A;font-weight:400;white-space:nowrap;transform-origin:0 0;transform:scaleX(1.0200);">Cliente 2</div>
<div id="t107" class="tx" style="position:absolute;left:680.71px;top:587.40px;font-size:15.63px;line-height:17.46px;color:#1A1A1A;font-weight:400;white-space:nowrap;transform-origin:0 0;transform:scaleX(1.0200);">Funcionário 2</div>
<div id="t108" class="tx" style="position:absolute;left:883.77px;top:587.40px;font-size:15.63px;line-height:17.46px;color:#1A1A1A;font-weight:400;white-space:nowrap;transform-origin:0 0;transform:scaleX(1.0800);">10/01/2023</div>
<div id="t109" class="tx" style="position:absolute;left:1028.63px;top:587.40px;font-size:15.63px;line-height:17.46px;color:#1A1A1A;font-weight:400;white-space:nowrap;transform-origin:0 0;transform:scaleX(1.0200);">8h</div>
<div id="t110" class="tx" style="position:absolute;left:1127.63px;top:587.40px;font-size:15.63px;line-height:17.46px;color:#1A1A1A;font-weight:400;white-space:nowrap;transform-origin:0 0;transform:scaleX(1.0200);">Manhã</div>
<div id="t111" class="tx" style="position:absolute;left:1248.86px;top:587.40px;font-size:15.63px;line-height:17.46px;color:#F2FFF6;font-weight:400;white-space:nowrap;transform-origin:0 0;transform:scaleX(1.0200);">Realizado</div>
<div id="t112" class="tx" style="position:absolute;left:147.78px;top:628.40px;font-size:15.63px;line-height:17.46px;color:#1A1A1A;font-weight:400;white-space:nowrap;transform-origin:0 0;transform:scaleX(1.0200);">Serviço 3</div>
<div id="t113" class="tx" style="position:absolute;left:423.55px;top:628.40px;font-size:15.63px;line-height:17.46px;color:#1A1A1A;font-weight:400;white-space:nowrap;transform-origin:0 0;transform:scaleX(1.0200);">Cliente 3</div>
<div id="t114" class="tx" style="position:absolute;left:680.71px;top:628.40px;font-size:15.63px;line-height:17.46px;color:#1A1A1A;font-weight:400;white-space:nowrap;transform-origin:0 0;transform:scaleX(1.0200);">Funcionário 3</div>
<div id="t115" class="tx" style="position:absolute;left:883.77px;top:628.40px;font-size:15.63px;line-height:17.46px;color:#1A1A1A;font-weight:400;white-space:nowrap;transform-origin:0 0;transform:scaleX(1.0800);">03/02/2023</div>
<div id="t116" class="tx" style="position:absolute;left:1028.63px;top:628.40px;font-size:15.63px;line-height:17.46px;color:#1A1A1A;font-weight:400;white-space:nowrap;transform-origin:0 0;transform:scaleX(1.0200);">9h</div>
<div id="t117" class="tx" style="position:absolute;left:1127.63px;top:628.40px;font-size:15.63px;line-height:17.46px;color:#1A1A1A;font-weight:400;white-space:nowrap;transform-origin:0 0;transform:scaleX(1.0200);">Manhã</div>
<div id="t118" class="tx" style="position:absolute;left:1248.86px;top:628.40px;font-size:15.63px;line-height:17.46px;color:#F2FFF6;font-weight:400;white-space:nowrap;transform-origin:0 0;transform:scaleX(1.0200);">Realizado</div>
<div id="t119" class="tx" style="position:absolute;left:147.78px;top:669.40px;font-size:15.63px;line-height:17.46px;color:#1A1A1A;font-weight:400;white-space:nowrap;transform-origin:0 0;transform:scaleX(1.0200);">Serviço 4</div>
<div id="t120" class="tx" style="position:absolute;left:423.55px;top:669.40px;font-size:15.63px;line-height:17.46px;color:#1A1A1A;font-weight:400;white-space:nowrap;transform-origin:0 0;transform:scaleX(1.0200);">Cliente 4</div>
<div id="t121" class="tx" style="position:absolute;left:680.71px;top:669.40px;font-size:15.63px;line-height:17.46px;color:#1A1A1A;font-weight:400;white-space:nowrap;transform-origin:0 0;transform:scaleX(1.0200);">Funcionário 4</div>
<div id="t122" class="tx" style="position:absolute;left:884.39px;top:669.40px;font-size:15.63px;line-height:17.46px;color:#1A1A1A;font-weight:400;white-space:nowrap;transform-origin:0 0;transform:scaleX(1.0800);">11/02/2023</div>
<div id="t123" class="tx" style="position:absolute;left:1024.79px;top:669.40px;font-size:15.63px;line-height:17.46px;color:#1A1A1A;font-weight:400;white-space:nowrap;transform-origin:0 0;transform:scaleX(1.0200);">11h</div>
<div id="t124" class="tx" style="position:absolute;left:1127.63px;top:669.40px;font-size:15.63px;line-height:17.46px;color:#1A1A1A;font-weight:400;white-space:nowrap;transform-origin:0 0;transform:scaleX(1.0200);">Manhã</div>
<div id="t125" class="tx" style="position:absolute;left:1232.02px;top:669.40px;font-size:15.63px;line-height:17.46px;color:#F2FFF6;font-weight:400;white-space:nowrap;transform-origin:0 0;transform:scaleX(1.0200);">Não Realizado</div>
<div id="t126" class="tx" style="position:absolute;left:1444.56px;top:669.40px;font-size:15.63px;line-height:17.46px;color:#1A1A1A;font-weight:400;white-space:nowrap;transform-origin:0 0;transform:scaleX(1.0200);">Falta de equipe</div>
<div id="t127" class="tx" style="position:absolute;left:147.78px;top:710.40px;font-size:15.63px;line-height:17.46px;color:#1A1A1A;font-weight:400;white-space:nowrap;transform-origin:0 0;transform:scaleX(1.0200);">Serviço 5</div>
<div id="t128" class="tx" style="position:absolute;left:423.55px;top:710.40px;font-size:15.63px;line-height:17.46px;color:#1A1A1A;font-weight:400;white-space:nowrap;transform-origin:0 0;transform:scaleX(1.0200);">Cliente 5</div>
<div id="t129" class="tx" style="position:absolute;left:680.71px;top:710.40px;font-size:15.63px;line-height:17.46px;color:#1A1A1A;font-weight:400;white-space:nowrap;transform-origin:0 0;transform:scaleX(1.0200);">Funcionário 5</div>
<div id="t130" class="tx" style="position:absolute;left:883.77px;top:710.40px;font-size:15.63px;line-height:17.46px;color:#1A1A1A;font-weight:400;white-space:nowrap;transform-origin:0 0;transform:scaleX(1.0800);">05/03/2023</div>
<div id="t131" class="tx" style="position:absolute;left:1024.79px;top:710.40px;font-size:15.63px;line-height:17.46px;color:#1A1A1A;font-weight:400;white-space:nowrap;transform-origin:0 0;transform:scaleX(1.0200);">11h</div>
<div id="t132" class="tx" style="position:absolute;left:1127.63px;top:710.40px;font-size:15.63px;line-height:17.46px;color:#1A1A1A;font-weight:400;white-space:nowrap;transform-origin:0 0;transform:scaleX(1.0200);">Manhã</div>
<div id="t133" class="tx" style="position:absolute;left:1248.86px;top:710.40px;font-size:15.63px;line-height:17.46px;color:#F2FFF6;font-weight:400;white-space:nowrap;transform-origin:0 0;transform:scaleX(1.0200);">Realizado</div>
<div id="t134" class="tx" style="position:absolute;left:147.78px;top:751.40px;font-size:15.63px;line-height:17.46px;color:#1A1A1A;font-weight:400;white-space:nowrap;transform-origin:0 0;transform:scaleX(1.0200);">Serviço 6</div>
<div id="t135" class="tx" style="position:absolute;left:423.55px;top:751.40px;font-size:15.63px;line-height:17.46px;color:#1A1A1A;font-weight:400;white-space:nowrap;transform-origin:0 0;transform:scaleX(1.0200);">Cliente 6</div>
<div id="t136" class="tx" style="position:absolute;left:680.71px;top:751.40px;font-size:15.63px;line-height:17.46px;color:#1A1A1A;font-weight:400;white-space:nowrap;transform-origin:0 0;transform:scaleX(1.0200);">Funcionário 5</div>
<div id="t137" class="tx" style="position:absolute;left:883.77px;top:751.40px;font-size:15.63px;line-height:17.46px;color:#1A1A1A;font-weight:400;white-space:nowrap;transform-origin:0 0;transform:scaleX(1.0800);">15/03/2023</div>
<div id="t138" class="tx" style="position:absolute;left:1024.20px;top:751.40px;font-size:15.63px;line-height:17.46px;color:#1A1A1A;font-weight:400;white-space:nowrap;transform-origin:0 0;transform:scaleX(1.0200);">14h</div>
<div id="t139" class="tx" style="position:absolute;left:1132.06px;top:751.40px;font-size:15.63px;line-height:17.46px;color:#1A1A1A;font-weight:400;white-space:nowrap;transform-origin:0 0;transform:scaleX(1.0200);">Tarde</div>
<div id="t140" class="tx" style="position:absolute;left:1248.86px;top:751.40px;font-size:15.63px;line-height:17.46px;color:#F2FFF6;font-weight:400;white-space:nowrap;transform-origin:0 0;transform:scaleX(1.0200);">Realizado</div>
<div id="t141" class="tx" style="position:absolute;left:147.78px;top:792.40px;font-size:15.63px;line-height:17.46px;color:#1A1A1A;font-weight:400;white-space:nowrap;transform-origin:0 0;transform:scaleX(1.0200);">Serviço 7</div>
<div id="t142" class="tx" style="position:absolute;left:423.55px;top:792.40px;font-size:15.63px;line-height:17.46px;color:#1A1A1A;font-weight:400;white-space:nowrap;transform-origin:0 0;transform:scaleX(1.0200);">Cliente 7</div>
<div id="t143" class="tx" style="position:absolute;left:680.71px;top:792.40px;font-size:15.63px;line-height:17.46px;color:#1A1A1A;font-weight:400;white-space:nowrap;transform-origin:0 0;transform:scaleX(1.0200);">Funcionário 2</div>
<div id="t144" class="tx" style="position:absolute;left:883.77px;top:792.40px;font-size:15.63px;line-height:17.46px;color:#1A1A1A;font-weight:400;white-space:nowrap;transform-origin:0 0;transform:scaleX(1.0800);">06/04/2023</div>
<div id="t145" class="tx" style="position:absolute;left:1015.34px;top:792.40px;font-size:15.63px;line-height:17.46px;color:#1A1A1A;font-weight:400;white-space:nowrap;transform-origin:0 0;transform:scaleX(1.0200);">20h30</div>
<div id="t146" class="tx" style="position:absolute;left:1133.39px;top:792.40px;font-size:15.63px;line-height:17.46px;color:#1A1A1A;font-weight:400;white-space:nowrap;transform-origin:0 0;transform:scaleX(1.0200);">Noite</div>
<div id="t147" class="tx" style="position:absolute;left:1248.86px;top:792.40px;font-size:15.63px;line-height:17.46px;color:#F2FFF6;font-weight:400;white-space:nowrap;transform-origin:0 0;transform:scaleX(1.0200);">Realizado</div>
<div id="t148" class="tx" style="position:absolute;left:147.78px;top:833.40px;font-size:15.63px;line-height:17.46px;color:#1A1A1A;font-weight:400;white-space:nowrap;transform-origin:0 0;transform:scaleX(1.0200);">Serviço 8</div>
<div id="t149" class="tx" style="position:absolute;left:423.55px;top:833.40px;font-size:15.63px;line-height:17.46px;color:#1A1A1A;font-weight:400;white-space:nowrap;transform-origin:0 0;transform:scaleX(1.0200);">Cliente 8</div>
<div id="t150" class="tx" style="position:absolute;left:680.71px;top:833.40px;font-size:15.63px;line-height:17.46px;color:#1A1A1A;font-weight:400;white-space:nowrap;transform-origin:0 0;transform:scaleX(1.0200);">Funcionário 3</div>
<div id="t151" class="tx" style="position:absolute;left:883.77px;top:833.40px;font-size:15.63px;line-height:17.46px;color:#1A1A1A;font-weight:400;white-space:nowrap;transform-origin:0 0;transform:scaleX(1.0800);">25/04/2023</div>
<div id="t152" class="tx" style="position:absolute;left:1024.20px;top:833.40px;font-size:15.63px;line-height:17.46px;color:#1A1A1A;font-weight:400;white-space:nowrap;transform-origin:0 0;transform:scaleX(1.0200);">19h</div>
<div id="t153" class="tx" style="position:absolute;left:1133.39px;top:833.40px;font-size:15.63px;line-height:17.46px;color:#1A1A1A;font-weight:400;white-space:nowrap;transform-origin:0 0;transform:scaleX(1.0200);">Noite</div>
<div id="t154" class="tx" style="position:absolute;left:1232.02px;top:833.40px;font-size:15.63px;line-height:17.46px;color:#F2FFF6;font-weight:400;white-space:nowrap;transform-origin:0 0;transform:scaleX(1.0200);">Não Realizado</div>
<div id="t155" class="tx" style="position:absolute;left:1411.34px;top:833.40px;font-size:15.63px;line-height:17.46px;color:#1A1A1A;font-weight:400;white-space:nowrap;transform-origin:0 0;transform:scaleX(1.0200);">Faltou Energia nesse dia</div>
<div id="t156" class="tx" style="position:absolute;left:147.78px;top:874.40px;font-size:15.63px;line-height:17.46px;color:#1A1A1A;font-weight:400;white-space:nowrap;transform-origin:0 0;transform:scaleX(1.0200);">Serviço 9</div>
<div id="t157" class="tx" style="position:absolute;left:423.55px;top:874.40px;font-size:15.63px;line-height:17.46px;color:#1A1A1A;font-weight:400;white-space:nowrap;transform-origin:0 0;transform:scaleX(1.0200);">Cliente 9</div>
<div id="t158" class="tx" style="position:absolute;left:680.71px;top:874.40px;font-size:15.63px;line-height:17.46px;color:#1A1A1A;font-weight:400;white-space:nowrap;transform-origin:0 0;transform:scaleX(1.0200);">Funcionário 3</div>
<div id="t159" class="tx" style="position:absolute;left:883.77px;top:874.40px;font-size:15.63px;line-height:17.46px;color:#1A1A1A;font-weight:400;white-space:nowrap;transform-origin:0 0;transform:scaleX(1.0800);">06/05/2023</div>
<div id="t160" class="tx" style="position:absolute;left:1015.34px;top:874.40px;font-size:15.63px;line-height:17.46px;color:#1A1A1A;font-weight:400;white-space:nowrap;transform-origin:0 0;transform:scaleX(1.0200);">14h30</div>
<div id="t161" class="tx" style="position:absolute;left:1132.06px;top:874.40px;font-size:15.63px;line-height:17.46px;color:#1A1A1A;font-weight:400;white-space:nowrap;transform-origin:0 0;transform:scaleX(1.0200);">Tarde</div>
<div id="t162" class="tx" style="position:absolute;left:1248.86px;top:874.40px;font-size:15.63px;line-height:17.46px;color:#F2FFF6;font-weight:400;white-space:nowrap;transform-origin:0 0;transform:scaleX(1.0200);">Realizado</div>
<div id="t163" class="tx" style="position:absolute;left:143.35px;top:915.40px;font-size:15.63px;line-height:17.46px;color:#1A1A1A;font-weight:400;white-space:nowrap;transform-origin:0 0;transform:scaleX(1.0200);">Serviço 10</div>
<div id="t164" class="tx" style="position:absolute;left:419.12px;top:915.40px;font-size:15.63px;line-height:17.46px;color:#1A1A1A;font-weight:400;white-space:nowrap;transform-origin:0 0;transform:scaleX(1.0200);">Cliente 10</div>
<div id="t165" class="tx" style="position:absolute;left:680.71px;top:915.40px;font-size:15.63px;line-height:17.46px;color:#1A1A1A;font-weight:400;white-space:nowrap;transform-origin:0 0;transform:scaleX(1.0200);">Funcionário 3</div>
<div id="t166" class="tx" style="position:absolute;left:883.77px;top:915.40px;font-size:15.63px;line-height:17.46px;color:#1A1A1A;font-weight:400;white-space:nowrap;transform-origin:0 0;transform:scaleX(1.0800);">15/05/2023</div>
<div id="t167" class="tx" style="position:absolute;left:1024.20px;top:915.40px;font-size:15.63px;line-height:17.46px;color:#1A1A1A;font-weight:400;white-space:nowrap;transform-origin:0 0;transform:scaleX(1.0200);">19h</div>
<div id="t168" class="tx" style="position:absolute;left:1133.39px;top:915.40px;font-size:15.63px;line-height:17.46px;color:#1A1A1A;font-weight:400;white-space:nowrap;transform-origin:0 0;transform:scaleX(1.0200);">Noite</div>
<div id="t169" class="tx" style="position:absolute;left:1248.86px;top:915.40px;font-size:15.63px;line-height:17.46px;color:#F2FFF6;font-weight:400;white-space:nowrap;transform-origin:0 0;transform:scaleX(1.0200);">Realizado</div>
<div style="position:absolute;left:43px;top:532px;width:276px;height:2px;background:#1E6B41"></div>
<div style="position:absolute;left:43px;top:574px;width:273px;height:2px;background:#1E6B41"></div>
<div style="position:absolute;left:43px;top:532px;width:2px;height:44px;background:#1E6B41"></div>
<div style="position:absolute;left:318px;top:532px;width:2px;height:40px;background:#1E6B41"></div>
<div style="position:absolute;left:316px;top:572px;width:5px;height:5px;background:#1E6B41;box-shadow:0 0 0 1px #fff"></div>
<svg style="position:absolute;left:319px;top:552px;" width="21" height="21" viewBox="0 0 21 21"><defs><linearGradient id="fg2" x1="0" y1="0" x2="0" y2="1"><stop offset="0" stop-color="#FFFFFF"/><stop offset="1" stop-color="#EEF0F4"/></linearGradient></defs><rect x="0.5" y="0.5" width="20" height="20" fill="url(#fg2)" stroke="#A8A8A8" stroke-width="1"/><path d="M6.8 9 H14.2 L10.5 13 Z" fill="#5E5E5E"/></svg>
<div style="position:absolute;left:1897px;top:314px;width:21px;height:699px;background:#F4F4F4;border-radius:11px"></div>
<svg style="position:absolute;left:1901px;top:320px;" width="12" height="9" viewBox="0 0 12 9"><path d="M6 0.5 L11.5 8.5 H0.5 Z" fill="#6E6E6E"/></svg>
<div style="position:absolute;left:1902px;top:335px;width:11px;height:21px;background:#757575;border-radius:5.5px"></div>
<svg style="position:absolute;left:1901px;top:999px;" width="12" height="9" viewBox="0 0 12 9"><path d="M0.5 0.5 H11.5 L6 8.5 Z" fill="#6E6E6E"/></svg>
<div style="position:absolute;left:0;top:1012px;width:1920px;height:40px;background:linear-gradient(90deg,#EBE3E5 0%,#EAE4E7 50%,#E7E5EE 100%)"></div>
<svg style="position:absolute;left:31px;top:1024px;" width="10" height="14" viewBox="0 0 10 14"><path d="M8.5 1 L2 7 L8.5 13" stroke="#8A8A8A" stroke-width="1.3" fill="none"/></svg>
<svg style="position:absolute;left:72px;top:1024px;" width="10" height="14" viewBox="0 0 10 14"><path d="M1.5 1 L8 7 L1.5 13" stroke="#8A8A8A" stroke-width="1.3" fill="none"/></svg>
<div id="t170" class="tx" style="position:absolute;left:151.50px;top:1023.42px;font-size:18.31px;line-height:20.46px;color:#333333;font-weight:400;white-space:nowrap;transform-origin:0 0;transform:scaleX(0.8718);">CAD_HOR</div>
<div id="t171" class="tx" style="position:absolute;left:264.00px;top:1023.42px;font-size:18.31px;line-height:20.46px;color:#333333;font-weight:400;white-space:nowrap;transform-origin:0 0;transform:scaleX(0.8260);">CAD_SER</div>
<div id="t172" class="tx" style="position:absolute;left:369.00px;top:1023.42px;font-size:18.31px;line-height:20.46px;color:#333333;font-weight:400;white-space:nowrap;transform-origin:0 0;transform:scaleX(0.8488);">CAD_CLI</div>
<div id="t173" class="tx" style="position:absolute;left:468.20px;top:1023.42px;font-size:18.31px;line-height:20.46px;color:#333333;font-weight:400;white-space:nowrap;transform-origin:0 0;transform:scaleX(0.8625);">CAD_EQU</div>
<div id="t174" class="tx" style="position:absolute;left:683.20px;top:1023.42px;font-size:18.31px;line-height:20.46px;color:#333333;font-weight:400;white-space:nowrap;transform-origin:0 0;transform:scaleX(0.8358);">AGE_DIS</div>
<div id="t175" class="tx" style="position:absolute;left:785.30px;top:1023.42px;font-size:18.31px;line-height:20.46px;color:#333333;font-weight:400;white-space:nowrap;transform-origin:0 0;transform:scaleX(0.8377);">REL_DIA</div>
<div id="t176" class="tx" style="position:absolute;left:883.20px;top:1023.42px;font-size:18.31px;line-height:20.46px;color:#333333;font-weight:400;white-space:nowrap;transform-origin:0 0;transform:scaleX(0.7960);">REL_AGE</div>
<div id="t177" class="tx" style="position:absolute;left:985.30px;top:1023.42px;font-size:18.31px;line-height:20.46px;color:#333333;font-weight:400;white-space:nowrap;transform-origin:0 0;transform:scaleX(0.7699);">REL_SER</div>
<div id="t178" class="tx" style="position:absolute;left:1084.40px;top:1023.42px;font-size:18.31px;line-height:20.46px;color:#333333;font-weight:400;white-space:nowrap;transform-origin:0 0;transform:scaleX(0.8902);">AJUDA</div>
<div style="position:absolute;left:247px;top:1020px;width:1px;height:24px;background:#CFCACD"></div>
<div style="position:absolute;left:352px;top:1020px;width:1px;height:24px;background:#CFCACD"></div>
<div style="position:absolute;left:452px;top:1020px;width:1px;height:24px;background:#CFCACD"></div>
<div style="position:absolute;left:562px;top:1020px;width:1px;height:24px;background:#CFCACD"></div>
<div style="position:absolute;left:666px;top:1020px;width:1px;height:24px;background:#CFCACD"></div>
<div style="position:absolute;left:768px;top:1020px;width:1px;height:24px;background:#CFCACD"></div>
<div style="position:absolute;left:866px;top:1020px;width:1px;height:24px;background:#CFCACD"></div>
<div style="position:absolute;left:968px;top:1020px;width:1px;height:24px;background:#CFCACD"></div>
<div style="position:absolute;left:1067px;top:1020px;width:1px;height:24px;background:#CFCACD"></div>
<div style="position:absolute;left:1155px;top:1020px;width:1px;height:24px;background:#CFCACD"></div>
<div style="position:absolute;left:567px;top:1012px;width:94px;height:35px;background:#FFFFFF;border-radius:0 0 6px 6px"></div>
<div id="t179" class="tx" style="position:absolute;left:577.20px;top:1019.62px;font-size:18.31px;line-height:20.46px;color:#141414;font-weight:700;white-space:nowrap;transform-origin:0 0;transform:scaleX(0.8641);">LAN_SER</div>
<div style="position:absolute;left:578px;top:1042px;width:73px;height:2.5px;background:#1E7145;border-radius:1px"></div>
<svg style="position:absolute;left:1207px;top:1024px;" width="16" height="15" viewBox="0 0 16 15"><path d="M8 0.5 V14.5 M0.5 7.5 H15.5" stroke="#333" stroke-width="1.4"/></svg>
<div style="position:absolute;left:1306px;top:1026px;width:3px;height:3px;background:#333;border-radius:1px"></div>
<div style="position:absolute;left:1306px;top:1031px;width:3px;height:3px;background:#333;border-radius:1px"></div>
<div style="position:absolute;left:1306px;top:1036px;width:3px;height:3px;background:#333;border-radius:1px"></div>
<div style="position:absolute;left:1328px;top:1021px;width:565px;height:21px;background:#F4F4F4;border-radius:11px"></div>
<svg style="position:absolute;left:1333px;top:1026px;" width="11" height="12" viewBox="0 0 11 12"><path d="M10 0.5 V11.5 L0.5 6 Z" fill="#6E6E6E"/></svg>
<div style="position:absolute;left:1349px;top:1026px;width:251px;height:11px;background:#747474;border-radius:5.5px"></div>
<svg style="position:absolute;left:1878px;top:1026px;" width="11" height="12" viewBox="0 0 11 12"><path d="M1 0.5 V11.5 L10.5 6 Z" fill="#6E6E6E"/></svg>
<div style="position:absolute;left:0px;top:1052px;width:1920px;height:28px;background:#F3F3F3"></div>
<div style="position:absolute;left:0px;top:1078px;width:1920px;height:1px;background:#D6D6D6"></div>
<div id="t180" class="tx" style="position:absolute;left:8.40px;top:1059.82px;font-size:12.79px;line-height:14.29px;color:#2B2B2B;font-weight:400;white-space:nowrap;transform-origin:0 0;transform:scaleX(1.0193);">Pronto</div>
<svg style="position:absolute;left:72px;top:1057px;" width="20" height="18" viewBox="0 0 20 18"><path d="M1 16.5 V1 H18 V7" stroke="#3A3A3A" stroke-width="1.3" fill="none"/><path d="M1 4 H18" stroke="#3A3A3A" stroke-width="1.3"/><path d="M4 8 H8 M4 11 H7 M4 14 H7" stroke="#3A3A3A" stroke-width="1"/><circle cx="13.5" cy="12.5" r="5" stroke="#3A3A3A" stroke-width="1.3" fill="#F3F3F3"/><circle cx="13.5" cy="12.5" r="2.3" fill="#3A3A3A"/></svg>
<svg style="position:absolute;left:112px;top:1056px;" width="20" height="20" viewBox="0 0 20 20"><g stroke="#1F1F1F" stroke-width="1.3" fill="none" stroke-linecap="round" stroke-linejoin="round"><circle cx="8.7" cy="3.9" r="2.1"/><path d="M4.2 4.5 Q1.4 4.6 2.2 7.2 Q3.5 8.4 5.6 8.9 Q6 12 4.3 16.6 Q4.8 18.8 6.9 17.6 L8.6 12.6 L9.7 14.4"/><path d="M6.5 6.4 Q8.7 7.3 11 6.5 Q13 5.6 14.2 4.8 Q16.8 4.4 16.4 6.8 Q15.6 8.2 12.4 9.3"/><path d="M10.3 10.3 L18.7 18.6 M18.5 10.3 L10.3 18.6"/></g></svg>
<div id="t181" class="tx" style="position:absolute;left:134.60px;top:1059.82px;font-size:12.79px;line-height:14.29px;color:#2B2B2B;font-weight:400;white-space:nowrap;transform-origin:0 0;transform:scaleX(1.0152);">Acessibilidade: investigar</div>
<div style="position:absolute;left:1548px;top:1052px;width:49px;height:26px;background:#E0E0E0"></div>
<svg style="position:absolute;left:1563px;top:1057px;" width="19" height="17" viewBox="0 0 19 17"><path d="M1 1 H17 V16 H1 Z M1 6 H17 M1 11 H17 M6.3 1 V16 M11.7 1 V16" stroke="#3A3A3A" stroke-width="1.3" fill="none"/></svg>
<svg style="position:absolute;left:1613px;top:1057px;" width="19" height="17" viewBox="0 0 19 17"><rect x="1" y="1" width="17" height="15" stroke="#3A3A3A" stroke-width="1.3" fill="none"/><rect x="4" y="4" width="11" height="9" stroke="#3A3A3A" stroke-width="1.1" fill="none"/><path d="M6 7 H13 M6 9.5 H13" stroke="#3A3A3A" stroke-width="1"/></svg>
<svg style="position:absolute;left:1663px;top:1057px;" width="19" height="17" viewBox="0 0 19 17"><rect x="1" y="1" width="17" height="15" stroke="#3A3A3A" stroke-width="1.3" fill="none"/><path d="M6 1 V9 H11 V1" stroke="#3A3A3A" stroke-width="1.2" fill="none"/></svg>
<div style="position:absolute;left:1705px;top:1065.5px;width:10px;height:1.3px;background:#3A3A3A"></div>
<div style="position:absolute;left:1721px;top:1065.5px;width:125px;height:1px;background:#8A8A8A"></div>
<div style="position:absolute;left:1781px;top:1059px;width:6px;height:14px;background:#6A6A6A;border-radius:1px"></div>
<svg style="position:absolute;left:1851px;top:1060px;" width="12" height="12" viewBox="0 0 12 12"><path d="M6 0.5 V11.5 M0.5 6 H11.5" stroke="#3A3A3A" stroke-width="1.3"/></svg>
<div id="t182" class="tx" style="position:absolute;left:1877.30px;top:1060.35px;font-size:12.65px;line-height:14.13px;color:#3A3A3A;font-weight:400;white-space:nowrap;transform-origin:0 0;transform:scaleX(0.9739);">100%</div>
</body></html>
